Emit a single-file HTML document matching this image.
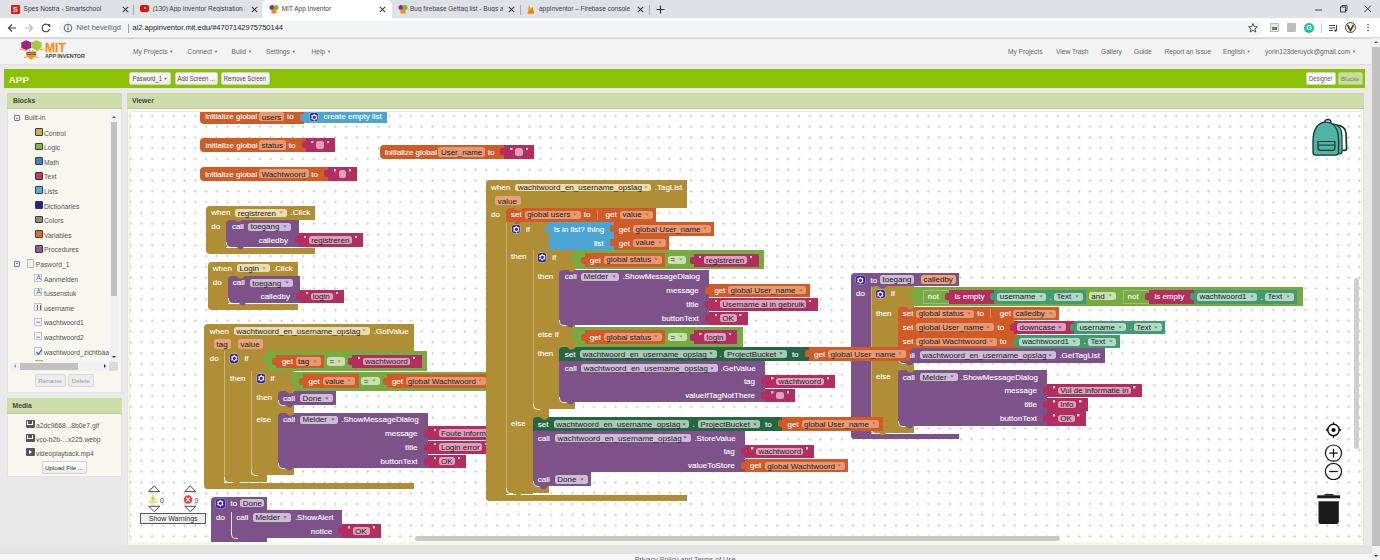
<!DOCTYPE html>
<html><head><meta charset="utf-8"><title>MIT App Inventor</title><style>
*{box-sizing:border-box;margin:0;padding:0}
html,body{width:1380px;height:560px;overflow:hidden;background:#e9e9e9;font-family:"Liberation Sans",sans-serif;position:relative}
.a{position:absolute}
.t{white-space:nowrap;line-height:1}
svg{display:block}
.w{-webkit-text-stroke:0.25px #fff}
</style></head><body>
<div class="a" style="left:0;top:0;width:1380px;height:18px;background:#dee1e6"></div>
<div class="a" style="left:262px;top:0;width:130px;height:18px;background:#fff;border-radius:5px 5px 0 0"></div>
<div class="a" style="left:11px;top:4.5px;width:8.5px;height:9px;background:#e51e12;border-radius:1px;color:#fff;font-size:7px;font-weight:bold;line-height:9px;text-align:center">S</div>
<div class="a t" style="left:23.6px;top:5.6px;font-size:6.5px;color:#3c4043;">Spes Nostra - Smartschool</div>
<div class="a" style="left:120.5px;top:4.7px;width:9px;height:9px"><svg width="9" height="9"><path d="M1.8 1.8L7.2 7.2M7.2 1.8L1.8 7.2" stroke="#3c3c3c" stroke-width="1.05"/></svg></div>
<div class="a" style="left:133.3px;top:4.5px;width:1px;height:10px;background:#a8abb0"></div>
<div class="a" style="left:140px;top:5.2px;width:9px;height:6.8px;background:#f00;border-radius:2px"></div><div class="a" style="left:143.5px;top:6.8px;width:0;height:0;border-left:3px solid #fff;border-top:1.8px solid transparent;border-bottom:1.8px solid transparent"></div>
<div class="a t" style="left:152.7px;top:5.6px;font-size:6.5px;color:#3c4043;width:92px;overflow:hidden;">(130) App Inventor Registration a</div>
<div class="a" style="left:249.5px;top:4.7px;width:9px;height:9px"><svg width="9" height="9"><path d="M1.8 1.8L7.2 7.2M7.2 1.8L1.8 7.2" stroke="#3c3c3c" stroke-width="1.05"/></svg></div>
<div class="a" style="left:268.5px;top:3.5px;width:10px;height:11px"><svg width="10" height="11"><circle cx="3" cy="3.5" r="2.5" fill="#8e2b8c"/><circle cx="7" cy="3.5" r="2.5" fill="#7bb42c"/><rect x="2.5" y="5.5" width="5" height="4" fill="#f08a24"/></svg></div>
<div class="a t" style="left:281.7px;top:5.6px;font-size:6.5px;color:#3c4043;">MIT App Inventor</div>
<div class="a" style="left:378.2px;top:4.7px;width:9px;height:9px"><svg width="9" height="9"><path d="M1.8 1.8L7.2 7.2M7.2 1.8L1.8 7.2" stroke="#3c3c3c" stroke-width="1.05"/></svg></div>
<div class="a" style="left:397.5px;top:3.5px;width:10px;height:11px"><svg width="10" height="11"><circle cx="3" cy="3.5" r="2.5" fill="#8e2b8c"/><circle cx="7" cy="3.5" r="2.5" fill="#7bb42c"/><rect x="2.5" y="5.5" width="5" height="4" fill="#f08a24"/></svg></div>
<div class="a t" style="left:410px;top:5.6px;font-size:6.5px;color:#3c4043;width:93px;overflow:hidden;">Bug firebase Gettag list - Bugs ar</div>
<div class="a" style="left:506.8px;top:4.7px;width:9px;height:9px"><svg width="9" height="9"><path d="M1.8 1.8L7.2 7.2M7.2 1.8L1.8 7.2" stroke="#3c3c3c" stroke-width="1.05"/></svg></div>
<div class="a" style="left:520px;top:4.5px;width:1px;height:10px;background:#a8abb0"></div>
<div class="a" style="left:525.5px;top:3.5px;width:9px;height:11px"><svg width="9" height="11"><path d="M1.5 9.5 L3 1 L5 5 L6.5 3 L8 9.5 Z" fill="#ffa000"/><path d="M1.5 9.5 L6.5 3 L8 9.5 Z" fill="#f57c00"/></svg></div>
<div class="a t" style="left:539px;top:5.6px;font-size:6.5px;color:#3c4043;">appInventor – Firebase console</div>
<div class="a" style="left:635.5px;top:4.7px;width:9px;height:9px"><svg width="9" height="9"><path d="M1.8 1.8L7.2 7.2M7.2 1.8L1.8 7.2" stroke="#3c3c3c" stroke-width="1.05"/></svg></div>
<div class="a" style="left:648.7px;top:4.5px;width:1px;height:10px;background:#a8abb0"></div>
<div class="a" style="left:655.5px;top:4.5px;width:9px;height:9px"><svg width="9" height="9"><path d="M4.5 0.5V8.5M0.5 4.5H8.5" stroke="#333" stroke-width="1.2"/></svg></div>
<div class="a" style="left:1313px;top:3px;width:12px;height:12px"><svg width="12" height="12"><path d="M2 7H9" stroke="#333" stroke-width="0.9"/></svg></div>
<div class="a" style="left:1338px;top:3px;width:12px;height:12px"><svg width="12" height="12"><rect x="2.5" y="4" width="5" height="5" fill="none" stroke="#333" stroke-width="0.9"/><path d="M4 4V2.5H9V7.5H7.5" fill="none" stroke="#333" stroke-width="0.9"/></svg></div>
<div class="a" style="left:1362px;top:3px;width:12px;height:12px"><svg width="12" height="12"><path d="M2.5 2.5L9 9M9 2.5L2.5 9" stroke="#333" stroke-width="0.9"/></svg></div>
<div class="a" style="left:0;top:18px;width:1380px;height:20px;background:#fff;border-bottom:1px solid #dadce0"></div>
<div class="a" style="left:58.5px;top:20.5px;width:1204px;height:15px;background:#f1f3f4;border-radius:8px"></div>
<div class="a" style="left:6px;top:22px;width:12px;height:12px"><svg width="12" height="12"><path d="M10 6H2.5M6 2.5L2.5 6L6 9.5" fill="none" stroke="#444" stroke-width="1.2"/></svg></div>
<div class="a" style="left:23px;top:22px;width:12px;height:12px"><svg width="12" height="12"><path d="M2 6H9.5M6 2.5L9.5 6L6 9.5" fill="none" stroke="#bbb" stroke-width="1.2"/></svg></div>
<div class="a" style="left:40px;top:22px;width:12px;height:12px"><svg width="12" height="12"><path d="M9.3 4.2A3.8 3.8 0 1 0 9.6 7" fill="none" stroke="#444" stroke-width="1.1"/><path d="M7.5 2.5L10 2.5L10 5Z" fill="#444" stroke="#444" stroke-width="0.6"/></svg></div>
<div class="a" style="left:63px;top:23px;width:10px;height:10px"><svg width="10" height="10"><circle cx="5" cy="5" r="3.8" fill="none" stroke="#555" stroke-width="0.9"/><path d="M5 4.3V7.3" stroke="#555" stroke-width="1"/><circle cx="5" cy="2.9" r="0.55" fill="#555"/></svg></div>
<div class="a t" style="left:76.5px;top:24.2px;font-size:7.4px;color:#5f6368">Niet beveiligd</div>
<div class="a" style="left:127.5px;top:24px;width:1px;height:9px;background:#9aa0a6"></div>
<div class="a t" style="left:132.5px;top:24px;font-size:7.5px;color:#202124">ai2.appinventor.mit.edu/#4707142975750144</div>
<div class="a" style="left:1247px;top:22px;width:12px;height:12px"><svg width="12" height="12"><path d="M6 1.5L7.3 4.6L10.5 4.8L8 6.9L8.8 10L6 8.3L3.2 10L4 6.9L1.5 4.8L4.7 4.6Z" fill="none" stroke="#444" stroke-width="0.9"/></svg></div>
<div class="a" style="left:1270px;top:23px;width:9px;height:9px;background:#e6e6e6;border:1px solid #bbb"><div class="a" style="left:1px;top:3px;width:5px;height:3px;background:linear-gradient(90deg,#e44,#4a4,#44e)"></div></div>
<div class="a" style="left:1287px;top:23px;width:9px;height:9px;background:#bdbdbd;border-radius:1px"></div>
<div class="a" style="left:1304px;top:23px;width:10px;height:10px;background:#15c39a;border-radius:5px;color:#fff;font-size:7px;font-weight:bold;line-height:10px;text-align:center">G</div>
<div class="a" style="left:1321px;top:23px;width:1px;height:10px;background:#ccc"></div>
<div class="a" style="left:1328px;top:22px;width:11px;height:12px"><svg width="11" height="12"><path d="M1 3.5H7M1 6H7M1 8.5H5" stroke="#333" stroke-width="0.9"/><path d="M8.5 3V8.5" stroke="#333" stroke-width="0.9"/><circle cx="7.6" cy="8.7" r="1.1" fill="#333"/></svg></div>
<div class="a" style="left:1345px;top:22px;width:11px;height:11px;border-radius:6px;background:#f5f0e0;border:1px solid #6b3b2a"><svg width="9" height="9" style="position:absolute;left:0;top:0"><path d="M1.5 2L4.5 7.5L7.5 2" fill="none" stroke="#2d4a1e" stroke-width="1.6"/></svg></div>
<div class="a" style="left:1367px;top:23px;width:2px;height:10px"><svg width="2" height="10"><circle cx="1" cy="1.5" r="0.8" fill="#444"/><circle cx="1" cy="4.5" r="0.8" fill="#444"/><circle cx="1" cy="7.5" r="0.8" fill="#444"/></svg></div>
<div class="a" style="left:0;top:38px;width:1372px;height:522px;background:#e9e9e9"></div>
<div class="a" style="left:0;top:38px;width:1371px;height:27px;background:#f3f3f3;border-bottom:1px solid #e0e0e0;border-top:1px solid #d4d4d4"></div>
<svg class="a" style="left:15px;top:38px" width="30" height="25">
<polygon points="11.3,2.2 16.3,4.6 16.3,9.8 11.3,12.2 6.3,9.8 6.3,4.6" fill="#a4218b"/>
<polygon points="21.4,2.2 26.6,4.6 26.6,9.8 21.4,12.2 16.3,9.8 16.3,4.6" fill="#9fcd3c"/>
<path d="M4.5 11.3Q8 10.8 11.5 12.8M28.3 11.3Q24.8 10.8 21.3 12.8" stroke="#f7931e" stroke-width="1" fill="none"/>
<path d="M11.7 13.4Q11.7 11 16.3 11Q20.9 11 20.9 13.4Z" fill="#fff"/>
<rect x="11.4" y="13.5" width="9.8" height="4.4" fill="#f7931e"/>
<rect x="11.4" y="14.2" width="9.8" height="0.9" fill="#555"/><rect x="11.4" y="16.1" width="9.8" height="0.9" fill="#555"/>
<path d="M11.4 17.9H21.2L16.3 21.7Z" fill="#f7931e"/>
<path d="M9 19.3Q11 19.8 12.5 18.5M23.6 19.3Q21.6 19.8 20.1 18.5" stroke="#f7931e" stroke-width="1" fill="none"/>
<circle cx="14.8" cy="12.3" r="0.5" fill="#333"/><circle cx="17.8" cy="12.3" r="0.5" fill="#333"/>
</svg>
<div class="a t" style="left:45px;top:42.1px;font-size:12px;font-weight:bold;color:#f7931e;letter-spacing:0.1px;-webkit-text-stroke:0.3px #f7931e">MIT</div>
<div class="a t" style="left:45.2px;top:54.3px;font-size:5.6px;font-weight:bold;color:#444;transform:scaleX(0.955);transform-origin:0 0">APP INVENTOR</div>
<div class="a t" style="left:133px;top:49px;font-size:6.6px;color:#666">My Projects <span style="font-size:4px;vertical-align:1px">▼</span></div>
<div class="a t" style="left:187.5px;top:49px;font-size:6.6px;color:#666">Connect <span style="font-size:4px;vertical-align:1px">▼</span></div>
<div class="a t" style="left:231.5px;top:49px;font-size:6.6px;color:#666">Build <span style="font-size:4px;vertical-align:1px">▼</span></div>
<div class="a t" style="left:266px;top:49px;font-size:6.6px;color:#666">Settings <span style="font-size:4px;vertical-align:1px">▼</span></div>
<div class="a t" style="left:311.5px;top:49px;font-size:6.6px;color:#666">Help <span style="font-size:4px;vertical-align:1px">▼</span></div>
<div class="a t" style="left:1008px;top:49px;font-size:6.6px;color:#666">My Projects</div>
<div class="a t" style="left:1056px;top:49px;font-size:6.6px;color:#666">View Trash</div>
<div class="a t" style="left:1101px;top:49px;font-size:6.6px;color:#666">Gallery</div>
<div class="a t" style="left:1134px;top:49px;font-size:6.6px;color:#666">Guide</div>
<div class="a t" style="left:1164.5px;top:49px;font-size:6.6px;color:#666">Report an Issue</div>
<div class="a t" style="left:1223px;top:49px;font-size:6.6px;color:#666">English <span style="font-size:4px;vertical-align:1px">▼</span></div>
<div class="a t" style="left:1265px;top:49px;font-size:6.6px;color:#666">yorin123deruyck@gmail.com <span style="font-size:4px;vertical-align:1px">▼</span></div>
<div class="a" style="left:4px;top:69px;width:1361px;height:19px;background:#8bc100"></div>
<div class="a t" style="left:8.8px;top:75px;font-size:9.8px;font-weight:bold;color:#fff">APP</div>
<div class="a t" style="left:128.5px;top:72px;width:42.5px;height:13px;background:linear-gradient(#fdfdfd,#ececec);border:1px solid #cfd2c8;border-radius:2px;font-size:6.4px;color:#444;line-height:11.5px;text-align:center;"><span style="display:inline-block;transform:scaleX(0.92)">Pasword_1 <span style="font-size:4px;vertical-align:1px">▼</span></span></div>
<div class="a t" style="left:174.5px;top:72px;width:43px;height:13px;background:linear-gradient(#fdfdfd,#ececec);border:1px solid #cfd2c8;border-radius:2px;font-size:6.4px;color:#444;line-height:11.5px;text-align:center;"><span style="display:inline-block;transform:scaleX(0.92)">Add Screen ...</span></div>
<div class="a t" style="left:220.5px;top:72px;width:49px;height:13px;background:linear-gradient(#fdfdfd,#ececec);border:1px solid #cfd2c8;border-radius:2px;font-size:6.4px;color:#444;line-height:11.5px;text-align:center;"><span style="display:inline-block;transform:scaleX(0.92)">Remove Screen</span></div>
<div class="a t" style="left:1305.5px;top:72px;width:30.5px;height:13px;background:linear-gradient(#fdfdfd,#ececec);border:1px solid #cfd2c8;border-radius:2px;font-size:6.4px;color:#444;line-height:11.5px;text-align:center;background:#fff;color:#555"><span style="display:inline-block;transform:scaleX(0.92)">Designer</span></div>
<div class="a t" style="left:1337.5px;top:72px;width:25px;height:13px;background:#c8dd9a;border:1px solid #b8d080;border-radius:2px;font-size:6.2px;color:#777;line-height:11px;text-align:center">Blocks</div>
<div class="a" style="left:7px;top:92.5px;width:114.5px;height:300.5px;background:#f7f7ef;border:1px solid #e4e4dc"></div>
<div class="a" style="left:7px;top:92.5px;width:114.5px;height:16px;background:#cddcaa;border-bottom:1px solid #b9c99a"></div>
<div class="a t" style="left:13px;top:97.6px;font-size:6.8px;font-weight:bold;color:#444">Blocks</div>
<div class="a" style="left:127px;top:92.5px;width:1237px;height:453px;background:#f7f7ef;border:1px solid #e4e4dc"></div>
<div class="a" style="left:127px;top:92.5px;width:1237px;height:16px;background:#cddcaa;border-bottom:1px solid #b9c99a"></div>
<div class="a t" style="left:132px;top:97.6px;font-size:6.8px;font-weight:bold;color:#444">Viewer</div>
<div class="a" style="left:7px;top:398px;width:114.5px;height:79px;background:#f7f7ef;border:1px solid #e4e4dc"></div>
<div class="a" style="left:7px;top:398px;width:114.5px;height:16px;background:#cddcaa;border-bottom:1px solid #b9c99a"></div>
<div class="a t" style="left:12.5px;top:403px;font-size:6.8px;font-weight:bold;color:#444">Media</div>
<div class="a" style="left:13.7px;top:115.00px;width:6px;height:6px;border:0.9px solid #6b6fc8;border-radius:1px"><div class="a" style="left:1.1px;top:1.7px;width:2.1px;height:0.9px;background:#6b6fc8"></div></div>
<div class="a t" style="left:24.5px;top:115.12px;font-size:6.75px;color:#555;">Built-in</div>
<div class="a" style="left:35px;top:128.00px;width:7.8px;height:7.8px;background:#d4ab4c;border:0.9px solid #3a3a3a;border-radius:1px"></div>
<div class="a t" style="left:44px;top:130.52px;font-size:6.75px;color:#555;">Control</div>
<div class="a" style="left:35px;top:142.60px;width:7.8px;height:7.8px;background:#84b54b;border:0.9px solid #3a3a3a;border-radius:1px"></div>
<div class="a t" style="left:44px;top:145.12px;font-size:6.75px;color:#555;">Logic</div>
<div class="a" style="left:35px;top:157.20px;width:7.8px;height:7.8px;background:#4a7fc1;border:0.9px solid #3a3a3a;border-radius:1px"></div>
<div class="a t" style="left:44px;top:159.72px;font-size:6.75px;color:#555;">Math</div>
<div class="a" style="left:35px;top:171.80px;width:7.8px;height:7.8px;background:#c53b6e;border:0.9px solid #3a3a3a;border-radius:1px"></div>
<div class="a t" style="left:44px;top:174.32px;font-size:6.75px;color:#555;">Text</div>
<div class="a" style="left:35px;top:186.40px;width:7.8px;height:7.8px;background:#4db0de;border:0.9px solid #3a3a3a;border-radius:1px"></div>
<div class="a t" style="left:44px;top:188.92px;font-size:6.75px;color:#555;">Lists</div>
<div class="a" style="left:35px;top:201.00px;width:7.8px;height:7.8px;background:#2b1d93;border:0.9px solid #3a3a3a;border-radius:1px"></div>
<div class="a t" style="left:44px;top:203.52px;font-size:6.75px;color:#555;">Dictionaries</div>
<div class="a" style="left:35px;top:215.60px;width:7.8px;height:7.8px;background:#8a8a8a;border:0.9px solid #3a3a3a;border-radius:1px"></div>
<div class="a t" style="left:44px;top:218.12px;font-size:6.75px;color:#555;">Colors</div>
<div class="a" style="left:35px;top:230.20px;width:7.8px;height:7.8px;background:#e06b2f;border:0.9px solid #3a3a3a;border-radius:1px"></div>
<div class="a t" style="left:44px;top:232.72px;font-size:6.75px;color:#555;">Variables</div>
<div class="a" style="left:35px;top:244.80px;width:7.8px;height:7.8px;background:#8c5d97;border:0.9px solid #3a3a3a;border-radius:1px"></div>
<div class="a t" style="left:44px;top:247.32px;font-size:6.75px;color:#555;">Procedures</div>
<div class="a" style="left:13.7px;top:260.50px;width:6px;height:6px;border:0.9px solid #6b6fc8;border-radius:1px"><div class="a" style="left:1.1px;top:1.7px;width:2.1px;height:0.9px;background:#6b6fc8"></div></div>
<div class="a" style="left:27px;top:258.70px;width:6.5px;height:9px;background:#f2f2f2;border:0.8px solid #bbb;border-top:1.6px solid #a9c93a;border-radius:1px"></div>
<div class="a t" style="left:35.7px;top:261.92px;font-size:6.75px;color:#555;">Pasword_1</div>
<div class="a" style="left:34.3px;top:273.80px;width:8px;height:8px;background:#f4f4f4;border:0.8px solid #c4c4c4"><span style="position:absolute;left:1px;top:-1px;font-size:7px;color:#4a6fc0">A</span></div>
<div class="a t" style="left:44px;top:276.52px;font-size:6.75px;color:#555;max-width:64.5px;overflow:hidden;padding-bottom:2px">Aanmelden</div>
<div class="a" style="left:34.3px;top:288.40px;width:8px;height:8px;background:#f4f4f4;border:0.8px solid #c4c4c4"><span style="position:absolute;left:1px;top:-1px;font-size:7px;color:#4a6fc0">A</span></div>
<div class="a t" style="left:44px;top:291.12px;font-size:6.75px;color:#555;max-width:64.5px;overflow:hidden;padding-bottom:2px">tussenstuk</div>
<div class="a" style="left:34.3px;top:303.00px;width:8px;height:8px;background:#f4f4f4;border:0.8px solid #c4c4c4"><span style="position:absolute;left:1.5px;top:1px;width:4px;height:5px;border-left:0.8px solid #666;border-right:0.8px solid #666"></span></div>
<div class="a t" style="left:44px;top:305.72px;font-size:6.75px;color:#555;max-width:64.5px;overflow:hidden;padding-bottom:2px">username</div>
<div class="a" style="left:34.3px;top:317.60px;width:8px;height:8px;background:#f4f4f4;border:0.8px solid #c4c4c4"><span style="position:absolute;left:1px;top:2.5px;font-size:5px;color:#4a6fc0;line-height:3px">••</span></div>
<div class="a t" style="left:44px;top:320.32px;font-size:6.75px;color:#555;max-width:64.5px;overflow:hidden;padding-bottom:2px">wachtwoord1</div>
<div class="a" style="left:34.3px;top:332.20px;width:8px;height:8px;background:#f4f4f4;border:0.8px solid #c4c4c4"><span style="position:absolute;left:1px;top:2.5px;font-size:5px;color:#4a6fc0;line-height:3px">••</span></div>
<div class="a t" style="left:44px;top:334.92px;font-size:6.75px;color:#555;max-width:64.5px;overflow:hidden;padding-bottom:2px">wachtwoord2</div>
<div class="a" style="left:34.3px;top:346.80px;width:8px;height:8px;background:#f4f4f4;border:0.8px solid #c4c4c4"><svg width="8" height="8" style="position:absolute;left:0;top:0"><path d="M1.5 4L3.5 6.2L7 1.5" fill="none" stroke="#3f6fc8" stroke-width="1.3"/></svg></div>
<div class="a t" style="left:44px;top:349.52px;font-size:6.75px;color:#555;max-width:64.5px;overflow:hidden;padding-bottom:2px">wachtwoord_zichtbaar</div>
<div class="a" style="left:34.5px;top:360px;width:8px;height:2px;background:#e8eed8;border-top:1px solid #a9c93a"></div>
<div class="a" style="left:109.5px;top:112px;width:8px;height:250px;background:#f1f1f1"></div>
<div class="a" style="left:110.5px;top:121.5px;width:6px;height:174px;background:#c1c1c1"></div>
<div class="a" style="left:111.5px;top:116px;width:0;height:0;border-left:2.5px solid transparent;border-right:2.5px solid transparent;border-bottom:2.5px solid #555"></div>
<div class="a" style="left:111.5px;top:355.5px;width:0;height:0;border-left:2.5px solid transparent;border-right:2.5px solid transparent;border-top:2.5px solid #333"></div>
<div class="a" style="left:10px;top:362px;width:108px;height:8.5px;background:#f1f1f1"></div>
<div class="a" style="left:19.5px;top:363px;width:58.5px;height:6.5px;background:#c1c1c1"></div>
<div class="a" style="left:109px;top:362px;width:9px;height:8.5px;background:#dcdcdc"></div>
<div class="a" style="left:13.5px;top:364px;width:0;height:0;border-top:2.5px solid transparent;border-bottom:2.5px solid transparent;border-right:2.5px solid #999"></div>
<div class="a" style="left:103.5px;top:364px;width:0;height:0;border-top:2.5px solid transparent;border-bottom:2.5px solid transparent;border-left:2.5px solid #333"></div>
<div class="a t" style="left:34.5px;top:373.5px;width:31px;height:13.5px;background:#ececec;border:1px solid #d8d8d8;border-radius:2px;font-size:6.2px;color:#999;line-height:11.5px;text-align:center">Rename</div>
<div class="a t" style="left:68px;top:373.5px;width:25.5px;height:13.5px;background:#ececec;border:1px solid #d8d8d8;border-radius:2px;font-size:6.2px;color:#999;line-height:11.5px;text-align:center">Delete</div>
<div class="a" style="left:25.7px;top:419.7px;width:9px;height:8.5px;background:#555;border-radius:1px"></div>
<div class="a" style="left:27px;top:420.7px;width:6px;height:4px;border:1px solid #fff;border-top:0"></div>
<div class="a t" style="left:36px;top:422.72px;font-size:6.75px;color:#555;">a2dc9668...8b0e7.gif</div>
<div class="a" style="left:25.7px;top:433.65px;width:9px;height:8.5px;background:#555;border-radius:1px"></div>
<div class="a" style="left:27px;top:434.65px;width:6px;height:4px;border:1px solid #fff;border-top:0"></div>
<div class="a t" style="left:36px;top:436.67px;font-size:6.75px;color:#555;">vco-b2b-...x225.webp</div>
<div class="a" style="left:25.7px;top:447.59999999999997px;width:9px;height:8.5px;background:#555;border-radius:1px"></div>
<div class="a" style="left:29px;top:449.59999999999997px;width:0;height:0;border-left:3px solid #fff;border-top:2.2px solid transparent;border-bottom:2.2px solid transparent"></div>
<div class="a t" style="left:36px;top:450.62px;font-size:6.75px;color:#555;">videoplayback.mp4</div>
<div class="a t" style="left:41.5px;top:460.5px;width:45px;height:13px;background:linear-gradient(#fdfdfd,#ececec);border:1px solid #d0d0d0;border-radius:2px;font-size:6.2px;color:#333;line-height:11px;text-align:center">Upload File ...</div>
<div class="a" style="left:1371.5px;top:38px;width:8.5px;height:522px;background:#f1f1f1"></div>
<div class="a" style="left:1372px;top:47px;width:8px;height:499px;background:#c1c1c1"></div>
<div class="a" style="left:1373.5px;top:40.5px;width:0;height:0;border-left:2.5px solid transparent;border-right:2.5px solid transparent;border-bottom:2.5px solid #555"></div>
<div class="a" style="left:1373.5px;top:554.5px;width:0;height:0;border-left:2.5px solid transparent;border-right:2.5px solid transparent;border-top:2.5px solid #333"></div>
<div class="a" style="left:0;top:546px;width:1371.5px;height:7.5px;background:#e3e3e3"></div>
<div class="a" style="left:0;top:553.5px;width:1371.5px;height:7px;background:#f5f5f5"></div>
<div class="a t" style="left:634.7px;top:556.1px;font-size:7.05px;color:#666">Privacy Policy and Terms of Use</div>
<div class="a" style="left:130px;top:112.3px;width:1230.5px;height:430.2px;background:#fff;overflow:hidden;box-shadow:-0.5px -0.5px 0 #e2e2dc">
<svg class="a" style="left:0;top:0" width="1231" height="431"><defs><pattern id="g" x="-4.790" y="-1.490" width="10.78" height="10.78" patternUnits="userSpaceOnUse"><path d="M3.890 5.390H6.890M5.390 3.890V6.890" stroke="#d2d2d2" stroke-width="0.95"/></pattern></defs><rect width="1231" height="431" fill="url(#g)"/></svg>
</div>
<div class="a" style="left:130px;top:112.3px;width:1230.5px;height:430.2px;overflow:hidden"><div class="a" style="left:-130px;top:-112.3px;width:1380px;height:560px">
<div class="a" style="left:200px;top:112px;width:104px;height:12px;background:#d05b26;border-radius:0 0 0 4px;"></div>
<div class="a t" style="left:205.25px;top:113.11px;font-size:8.00px;color:#fff;-webkit-text-stroke:0.1px #fff;transform:scaleX(1.0000);transform-origin:0 0;">initialize global</div>
<div class="a" style="left:259.25px;top:112.25px;width:25.00px;height:9.00px;background:#e59a76;border-radius:2.5px"></div>
<div class="a t" style="left:261.75px;top:113.56px;font-size:8.00px;color:#1a1a1a;transform:scaleX(1.0000);transform-origin:0 0;">users</div>
<div class="a t" style="left:287.00px;top:113.11px;font-size:8.00px;color:#fff;-webkit-text-stroke:0.1px #fff;transform:scaleX(1.0000);transform-origin:0 0;">to</div>
<div class="a" style="left:304px;top:112px;width:83px;height:11px;background:#4aa5d5;"></div>
<div class="a" style="left:299.75px;top:113.88px;width:4.5px;height:7px;background:#4aa5d5;border-radius:2px 0 0 2px"></div>
<div class="a" style="left:309.50px;top:112.50px;width:8.6px;height:8.6px;background:#2b22c4;border-radius:2px;box-shadow:0 0 0 0.5px rgba(255,255,230,0.45)"><svg width="8.6" height="8.6" style="display:block"><circle cx="4.3" cy="4.3" r="2.2" fill="none" stroke="#f4f0d8" stroke-width="1.2"/><g fill="#f4f0d8"><circle cx="4.3" cy="1.5" r="0.75"/><circle cx="4.3" cy="7.1" r="0.75"/><circle cx="1.9" cy="2.9" r="0.75"/><circle cx="6.7" cy="2.9" r="0.75"/><circle cx="1.9" cy="5.7" r="0.75"/><circle cx="6.7" cy="5.7" r="0.75"/></g><circle cx="4.3" cy="4.3" r="0.9" fill="#2b22c4"/></svg></div>
<div class="a t" style="left:323.50px;top:113.11px;font-size:8.00px;color:#fff;-webkit-text-stroke:0.1px #fff;transform:scaleX(1.0000);transform-origin:0 0;">create empty list</div>
<div class="a" style="left:200px;top:138px;width:106px;height:14px;background:#d05b26;border-radius:4px 0 0 4px;"></div>
<div class="a t" style="left:205.60px;top:141.61px;font-size:8.00px;color:#fff;-webkit-text-stroke:0.1px #fff;transform:scaleX(1.0000);transform-origin:0 0;">initialize global</div>
<div class="a" style="left:259.10px;top:140.40px;width:27.00px;height:9.40px;background:#e59a76;border-radius:2.5px"></div>
<div class="a t" style="left:261.60px;top:141.91px;font-size:8.00px;color:#1a1a1a;transform:scaleX(1.0000);transform-origin:0 0;">status</div>
<div class="a t" style="left:288.70px;top:141.61px;font-size:8.00px;color:#fff;-webkit-text-stroke:0.1px #fff;transform:scaleX(1.0000);transform-origin:0 0;">to</div>
<div class="a" style="left:306px;top:138px;width:29px;height:14px;background:#b32d5e;"></div>
<div class="a" style="left:301.70px;top:141.30px;width:4.5px;height:7px;background:#b32d5e;border-radius:2px 0 0 2px"></div>
<div class="a" style="left:316.20px;top:141.00px;width:7.60px;height:7.60px;background:#dba2bd;border-radius:2.5px"></div>
<svg class="a" style="left:311.20px;top:140.50px" width="2.4" height="2.4"><rect width="2.4" height="2.4" fill="#f3dbe6"/></svg>
<svg class="a" style="left:326.60px;top:140.50px" width="2.4" height="2.4"><rect width="2.4" height="2.4" fill="#f3dbe6"/></svg>
<div class="a" style="left:200px;top:167px;width:128px;height:14px;background:#d05b26;border-radius:4px 0 0 4px;"></div>
<div class="a t" style="left:205.25px;top:170.56px;font-size:8.00px;color:#fff;-webkit-text-stroke:0.1px #fff;transform:scaleX(1.0000);transform-origin:0 0;">initialize global</div>
<div class="a" style="left:258.90px;top:169.10px;width:50.10px;height:9.30px;background:#e59a76;border-radius:2.5px"></div>
<div class="a t" style="left:261.40px;top:170.56px;font-size:8.00px;color:#1a1a1a;transform:scaleX(1.0000);transform-origin:0 0;">Wachtwoord</div>
<div class="a t" style="left:311.30px;top:170.56px;font-size:8.00px;color:#fff;-webkit-text-stroke:0.1px #fff;transform:scaleX(1.0000);transform-origin:0 0;">to</div>
<div class="a" style="left:328px;top:167px;width:29px;height:14px;background:#b32d5e;"></div>
<div class="a" style="left:324.30px;top:170.25px;width:4.5px;height:7px;background:#b32d5e;border-radius:2px 0 0 2px"></div>
<div class="a" style="left:338.90px;top:169.95px;width:7.40px;height:7.60px;background:#dba2bd;border-radius:2.5px"></div>
<svg class="a" style="left:333.90px;top:169.45px" width="2.4" height="2.4"><rect width="2.4" height="2.4" fill="#f3dbe6"/></svg>
<svg class="a" style="left:349.10px;top:169.45px" width="2.4" height="2.4"><rect width="2.4" height="2.4" fill="#f3dbe6"/></svg>
<div class="a" style="left:380px;top:145px;width:124px;height:14px;background:#d05b26;border-radius:4px 0 0 4px;"></div>
<div class="a t" style="left:384.90px;top:148.71px;font-size:8.00px;color:#fff;-webkit-text-stroke:0.1px #fff;transform:scaleX(1.0000);transform-origin:0 0;">initialize global</div>
<div class="a" style="left:438.40px;top:147.10px;width:46.80px;height:9.50px;background:#e59a76;border-radius:2.5px"></div>
<div class="a t" style="left:440.90px;top:148.66px;font-size:8.00px;color:#1a1a1a;transform:scaleX(1.0000);transform-origin:0 0;">User_name</div>
<div class="a t" style="left:487.70px;top:148.71px;font-size:8.00px;color:#fff;-webkit-text-stroke:0.1px #fff;transform:scaleX(1.0000);transform-origin:0 0;">to</div>
<div class="a" style="left:504px;top:145px;width:30px;height:14px;background:#b32d5e;"></div>
<div class="a" style="left:500.30px;top:148.45px;width:4.5px;height:7px;background:#b32d5e;border-radius:2px 0 0 2px"></div>
<div class="a" style="left:515.40px;top:148.15px;width:7.40px;height:7.60px;background:#dba2bd;border-radius:2.5px"></div>
<svg class="a" style="left:510.40px;top:147.65px" width="2.4" height="2.4"><rect width="2.4" height="2.4" fill="#f3dbe6"/></svg>
<svg class="a" style="left:525.60px;top:147.65px" width="2.4" height="2.4"><rect width="2.4" height="2.4" fill="#f3dbe6"/></svg>
<div class="a" style="left:206px;top:206px;width:109px;height:14px;background:#b08e35;border-radius:4px 0 0 0;"></div>
<div class="a" style="left:206px;top:220px;width:20px;height:28px;background:#b08e35;"></div>
<div class="a" style="left:206px;top:248px;width:109px;height:6px;background:#b08e35;border-radius:0 0 0 4px;"></div>
<div class="a t" style="left:211.25px;top:209.41px;font-size:8.00px;color:#fff;-webkit-text-stroke:0.1px #fff;transform:scaleX(1.0000);transform-origin:0 0;">when</div>
<div class="a" style="left:235.25px;top:208.50px;width:51.65px;height:8.40px;background:#e7dcb4;border-radius:2.5px"></div>
<div class="a t" style="left:237.75px;top:209.51px;font-size:8.00px;color:#1a1a1a;transform:scaleX(1.0000);transform-origin:0 0;">registreren</div>
<svg class="a" style="left:279.30px;top:211.10px" width="4" height="3"><path d="M0.3 0.4H3.7L2 2.6Z" fill="#b08e35"/></svg>
<div class="a t" style="left:290.60px;top:209.41px;font-size:8.00px;color:#fff;-webkit-text-stroke:0.1px #fff;transform:scaleX(1.0000);transform-origin:0 0;">.Click</div>
<div class="a t" style="left:211.25px;top:223.06px;font-size:8.00px;color:#fff;-webkit-text-stroke:0.1px #fff;transform:scaleX(1.0000);transform-origin:0 0;">do</div>
<div class="a" style="left:226px;top:220px;width:4px;height:4px;background:#b08e35;"></div>
<div class="a" style="left:226px;top:243px;width:4px;height:4px;background:#b08e35;"></div>
<div class="a" style="left:226px;top:220px;width:73px;height:27px;background:#7c5289;border-radius:4px 0 0 4px;"></div>
<div class="a t" style="left:231.90px;top:223.31px;font-size:8.00px;color:#fff;-webkit-text-stroke:0.1px #fff;transform:scaleX(1.0000);transform-origin:0 0;">call</div>
<div class="a" style="left:248.00px;top:222.50px;width:42.60px;height:8.10px;background:#cdbcd5;border-radius:2.5px"></div>
<div class="a t" style="left:250.50px;top:223.36px;font-size:8.00px;color:#1a1a1a;transform:scaleX(1.0000);transform-origin:0 0;">toegang</div>
<svg class="a" style="left:283.00px;top:224.95px" width="4" height="3"><path d="M0.3 0.4H3.7L2 2.6Z" fill="#7c5289"/></svg>
<div class="a t" style="left:-12.00px;width:300.00px;text-align:right;top:236.81px;font-size:8.00px;color:#fff;-webkit-text-stroke:0.1px #fff;transform:scaleX(1.0000);transform-origin:300.00px 0">calledby</div>
<div class="a" style="left:299px;top:233px;width:64px;height:14px;background:#b32d5e;"></div>
<div class="a" style="left:294.50px;top:236.45px;width:4.5px;height:7px;background:#b32d5e;border-radius:2px 0 0 2px"></div>
<div class="a" style="left:309.00px;top:236.15px;width:43.25px;height:7.60px;background:#dba2bd;border-radius:2.5px"></div>
<div class="a t" style="left:311.20px;top:236.76px;font-size:8.00px;color:#1a1a1a;transform:scaleX(1.0000);transform-origin:0 0;">registreren</div>
<svg class="a" style="left:304.00px;top:235.65px" width="2.4" height="2.4"><rect width="2.4" height="2.4" fill="#f3dbe6"/></svg>
<svg class="a" style="left:355.05px;top:235.65px" width="2.4" height="2.4"><rect width="2.4" height="2.4" fill="#f3dbe6"/></svg>
<div class="a" style="left:208px;top:262px;width:90px;height:14px;background:#b08e35;border-radius:4px 0 0 0;"></div>
<div class="a" style="left:208px;top:276px;width:20px;height:28px;background:#b08e35;"></div>
<div class="a" style="left:208px;top:304px;width:90px;height:6px;background:#b08e35;border-radius:0 0 0 4px;"></div>
<div class="a t" style="left:212.75px;top:265.31px;font-size:8.00px;color:#fff;-webkit-text-stroke:0.1px #fff;transform:scaleX(1.0000);transform-origin:0 0;">when</div>
<div class="a" style="left:236.90px;top:264.40px;width:33.10px;height:8.10px;background:#e7dcb4;border-radius:2.5px"></div>
<div class="a t" style="left:239.40px;top:265.26px;font-size:8.00px;color:#1a1a1a;transform:scaleX(1.0000);transform-origin:0 0;">Login</div>
<svg class="a" style="left:262.40px;top:266.85px" width="4" height="3"><path d="M0.3 0.4H3.7L2 2.6Z" fill="#b08e35"/></svg>
<div class="a t" style="left:273.10px;top:265.31px;font-size:8.00px;color:#fff;-webkit-text-stroke:0.1px #fff;transform:scaleX(1.0000);transform-origin:0 0;">.Click</div>
<div class="a t" style="left:212.75px;top:279.06px;font-size:8.00px;color:#fff;-webkit-text-stroke:0.1px #fff;transform:scaleX(1.0000);transform-origin:0 0;">do</div>
<div class="a" style="left:228px;top:276px;width:4px;height:4px;background:#b08e35;"></div>
<div class="a" style="left:228px;top:299px;width:4px;height:4px;background:#b08e35;"></div>
<div class="a" style="left:228px;top:276px;width:72px;height:27px;background:#7c5289;border-radius:4px 0 0 4px;"></div>
<div class="a t" style="left:232.75px;top:279.31px;font-size:8.00px;color:#fff;-webkit-text-stroke:0.1px #fff;transform:scaleX(1.0000);transform-origin:0 0;">call</div>
<div class="a" style="left:249.75px;top:278.75px;width:42.75px;height:8.15px;background:#cdbcd5;border-radius:2.5px"></div>
<div class="a t" style="left:252.25px;top:279.63px;font-size:8.00px;color:#1a1a1a;transform:scaleX(1.0000);transform-origin:0 0;">toegang</div>
<svg class="a" style="left:284.90px;top:281.22px" width="4" height="3"><path d="M0.3 0.4H3.7L2 2.6Z" fill="#7c5289"/></svg>
<div class="a t" style="left:-10.00px;width:300.00px;text-align:right;top:292.81px;font-size:8.00px;color:#fff;-webkit-text-stroke:0.1px #fff;transform:scaleX(1.0000);transform-origin:300.00px 0">calledby</div>
<div class="a" style="left:300px;top:290px;width:44px;height:13px;background:#b32d5e;"></div>
<div class="a" style="left:296.00px;top:292.82px;width:4.5px;height:7px;background:#b32d5e;border-radius:2px 0 0 2px"></div>
<div class="a" style="left:310.60px;top:292.52px;width:22.15px;height:7.60px;background:#dba2bd;border-radius:2.5px"></div>
<div class="a t" style="left:312.80px;top:293.13px;font-size:8.00px;color:#1a1a1a;transform:scaleX(1.0000);transform-origin:0 0;">login</div>
<svg class="a" style="left:305.60px;top:292.02px" width="2.4" height="2.4"><rect width="2.4" height="2.4" fill="#f3dbe6"/></svg>
<svg class="a" style="left:335.55px;top:292.02px" width="2.4" height="2.4"><rect width="2.4" height="2.4" fill="#f3dbe6"/></svg>
<svg class="a" style="left:233.75px;top:219.45px" width="9" height="3.5"><path d="M0 0L3 2.6H6L9 0Z" fill="#b08e35"/></svg>
<div class="a" style="left:225.80px;top:241.90px;width:7px;height:6px;border-left:1px solid rgba(255,255,255,0.85);border-bottom:1px solid rgba(255,255,255,0.85);border-bottom-left-radius:5px"></div>
<svg class="a" style="left:235.50px;top:246.00px" width="9" height="4"><path d="M0 0L3 3.2H6L9 0Z" fill="#7c5289"/></svg>
<svg class="a" style="left:235.60px;top:275.70px" width="9" height="3.5"><path d="M0 0L3 2.6H6L9 0Z" fill="#b08e35"/></svg>
<div class="a" style="left:227.80px;top:297.90px;width:7px;height:6px;border-left:1px solid rgba(255,255,255,0.85);border-bottom:1px solid rgba(255,255,255,0.85);border-bottom-left-radius:5px"></div>
<svg class="a" style="left:237.50px;top:302.00px" width="9" height="4"><path d="M0 0L3 3.2H6L9 0Z" fill="#7c5289"/></svg>
<div class="a" style="left:204px;top:324px;width:210px;height:27px;background:#b08e35;border-radius:4px 0 0 0;"></div>
<div class="a" style="left:204px;top:351px;width:20px;height:138px;background:#b08e35;border-radius:0 0 0 4px;"></div>
<div class="a" style="left:204px;top:483px;width:210px;height:6px;background:#b08e35;border-radius:0 0 0 4px;"></div>
<div class="a t" style="left:209.75px;top:327.56px;font-size:8.00px;color:#fff;-webkit-text-stroke:0.1px #fff;transform:scaleX(1.0000);transform-origin:0 0;">when</div>
<div class="a" style="left:233.75px;top:326.50px;width:136.25px;height:8.40px;background:#e7dcb4;border-radius:2.5px"></div>
<div class="a t" style="left:236.25px;top:327.51px;font-size:8.00px;color:#1a1a1a;transform:scaleX(1.0000);transform-origin:0 0;">wachtwoord_en_username_opslag</div>
<svg class="a" style="left:362.40px;top:329.10px" width="4" height="3"><path d="M0.3 0.4H3.7L2 2.6Z" fill="#b08e35"/></svg>
<div class="a t" style="left:373.75px;top:327.56px;font-size:8.00px;color:#fff;-webkit-text-stroke:0.1px #fff;transform:scaleX(1.0000);transform-origin:0 0;">.GotValue</div>
<div class="a" style="left:214.00px;top:339.25px;width:17.00px;height:9.35px;background:#e8a27c;border-radius:2.5px"></div>
<div class="a t" style="left:216.50px;top:340.73px;font-size:8.00px;color:#1a1a1a;transform:scaleX(1.0000);transform-origin:0 0;">tag</div>
<div class="a" style="left:238.10px;top:339.25px;width:25.00px;height:9.35px;background:#e8a27c;border-radius:2.5px"></div>
<div class="a t" style="left:240.60px;top:340.73px;font-size:8.00px;color:#1a1a1a;transform:scaleX(1.0000);transform-origin:0 0;">value</div>
<div class="a t" style="left:209.75px;top:354.81px;font-size:8.00px;color:#fff;-webkit-text-stroke:0.1px #fff;transform:scaleX(1.0000);transform-origin:0 0;">do</div>
<div class="a" style="left:224px;top:351px;width:4px;height:4px;background:#b08e35;"></div>
<div class="a" style="left:224px;top:478px;width:4px;height:4px;background:#b08e35;"></div>
<div class="a" style="left:224px;top:351px;width:43px;height:20px;background:#b08e35;border-radius:3px 0 0 0;"></div>
<div class="a" style="left:224px;top:371px;width:27px;height:104px;background:#b08e35;"></div>
<div class="a" style="left:224px;top:475px;width:43px;height:7px;background:#b08e35;border-radius:0 0 0 3px;"></div>
<div class="a" style="left:224px;top:351px;width:1px;height:131px;background:rgba(255,255,255,0.35);"></div>
<div class="a" style="left:229.75px;top:354.25px;width:8.6px;height:8.6px;background:#2b22c4;border-radius:2px;box-shadow:0 0 0 0.5px rgba(255,255,230,0.45)"><svg width="8.6" height="8.6" style="display:block"><circle cx="4.3" cy="4.3" r="2.2" fill="none" stroke="#f4f0d8" stroke-width="1.2"/><g fill="#f4f0d8"><circle cx="4.3" cy="1.5" r="0.75"/><circle cx="4.3" cy="7.1" r="0.75"/><circle cx="1.9" cy="2.9" r="0.75"/><circle cx="6.7" cy="2.9" r="0.75"/><circle cx="1.9" cy="5.7" r="0.75"/><circle cx="6.7" cy="5.7" r="0.75"/></g><circle cx="4.3" cy="4.3" r="0.9" fill="#2b22c4"/></svg></div>
<div class="a t" style="left:244.40px;top:354.81px;font-size:8.00px;color:#fff;-webkit-text-stroke:0.1px #fff;transform:scaleX(1.0000);transform-origin:0 0;">if</div>
<div class="a t" style="left:230.00px;top:374.56px;font-size:8.00px;color:#fff;-webkit-text-stroke:0.1px #fff;transform:scaleX(1.0000);transform-origin:0 0;">then</div>
<div class="a" style="left:267px;top:351px;width:160px;height:20px;background:#77ab41;"></div>
<div class="a" style="left:263.25px;top:355.05px;width:4.5px;height:7px;background:#77ab41;border-radius:2px 0 0 2px"></div>
<div class="a" style="left:276px;top:355px;width:48px;height:13px;background:#d05b26;"></div>
<div class="a" style="left:272.25px;top:357.88px;width:4.5px;height:7px;background:#d05b26;border-radius:2px 0 0 2px"></div>
<div class="a t" style="left:281.90px;top:358.21px;font-size:8.00px;color:#fff;-webkit-text-stroke:0.1px #fff;transform:scaleX(1.0000);transform-origin:0 0;">get</div>
<div class="a" style="left:295.60px;top:357.00px;width:25.00px;height:8.50px;background:#e59a76;border-radius:2.5px"></div>
<div class="a t" style="left:298.10px;top:358.06px;font-size:8.00px;color:#1a1a1a;transform:scaleX(1.0000);transform-origin:0 0;">tag</div>
<svg class="a" style="left:313.00px;top:359.65px" width="4" height="3"><path d="M0.3 0.4H3.7L2 2.6Z" fill="#d05b26"/></svg>
<div class="a" style="left:326.90px;top:357.00px;width:18.10px;height:8.50px;background:#c9e0b0;border-radius:2.5px"></div>
<div class="a t" style="left:329.40px;top:358.06px;font-size:8.00px;color:#1a1a1a;transform:scaleX(1.0000);transform-origin:0 0;">=</div>
<svg class="a" style="left:337.40px;top:359.65px" width="4" height="3"><path d="M0.3 0.4H3.7L2 2.6Z" fill="#77ab41"/></svg>
<div class="a" style="left:352px;top:355px;width:70px;height:13px;background:#b32d5e;"></div>
<div class="a" style="left:347.90px;top:357.88px;width:4.5px;height:7px;background:#b32d5e;border-radius:2px 0 0 2px"></div>
<div class="a" style="left:362.90px;top:357.57px;width:47.10px;height:7.60px;background:#dba2bd;border-radius:2.5px"></div>
<div class="a t" style="left:365.10px;top:358.18px;font-size:8.00px;color:#1a1a1a;transform:scaleX(1.0000);transform-origin:0 0;">wachtwoord</div>
<svg class="a" style="left:357.90px;top:357.07px" width="2.4" height="2.4"><rect width="2.4" height="2.4" fill="#f3dbe6"/></svg>
<svg class="a" style="left:412.80px;top:357.07px" width="2.4" height="2.4"><rect width="2.4" height="2.4" fill="#f3dbe6"/></svg>
<div class="a" style="left:251px;top:371px;width:4px;height:4px;background:#b08e35;"></div>
<div class="a" style="left:251px;top:471px;width:4px;height:4px;background:#b08e35;"></div>
<div class="a" style="left:251px;top:371px;width:43px;height:20px;background:#b08e35;border-radius:3px 0 0 0;"></div>
<div class="a" style="left:251px;top:391px;width:27px;height:77px;background:#b08e35;"></div>
<div class="a" style="left:251px;top:405px;width:43px;height:8px;background:#b08e35;"></div>
<div class="a" style="left:251px;top:468px;width:43px;height:7px;background:#b08e35;border-radius:0 0 0 3px;"></div>
<div class="a" style="left:251px;top:371px;width:1px;height:104px;background:rgba(255,255,255,0.35);"></div>
<div class="a" style="left:256.90px;top:374.00px;width:8.6px;height:8.6px;background:#2b22c4;border-radius:2px;box-shadow:0 0 0 0.5px rgba(255,255,230,0.45)"><svg width="8.6" height="8.6" style="display:block"><circle cx="4.3" cy="4.3" r="2.2" fill="none" stroke="#f4f0d8" stroke-width="1.2"/><g fill="#f4f0d8"><circle cx="4.3" cy="1.5" r="0.75"/><circle cx="4.3" cy="7.1" r="0.75"/><circle cx="1.9" cy="2.9" r="0.75"/><circle cx="6.7" cy="2.9" r="0.75"/><circle cx="1.9" cy="5.7" r="0.75"/><circle cx="6.7" cy="5.7" r="0.75"/></g><circle cx="4.3" cy="4.3" r="0.9" fill="#2b22c4"/></svg></div>
<div class="a t" style="left:270.60px;top:375.01px;font-size:8.00px;color:#fff;-webkit-text-stroke:0.1px #fff;transform:scaleX(1.0000);transform-origin:0 0;">if</div>
<div class="a" style="left:294px;top:372px;width:192px;height:19px;background:#77ab41;"></div>
<div class="a" style="left:289.75px;top:375.38px;width:4.5px;height:7px;background:#77ab41;border-radius:2px 0 0 2px"></div>
<div class="a" style="left:303px;top:374px;width:56px;height:14px;background:#d05b26;"></div>
<div class="a" style="left:299.10px;top:377.62px;width:4.5px;height:7px;background:#d05b26;border-radius:2px 0 0 2px"></div>
<div class="a t" style="left:308.50px;top:377.91px;font-size:8.00px;color:#fff;-webkit-text-stroke:0.1px #fff;transform:scaleX(1.0000);transform-origin:0 0;">get</div>
<div class="a" style="left:322.50px;top:376.75px;width:32.50px;height:8.15px;background:#e59a76;border-radius:2.5px"></div>
<div class="a t" style="left:325.00px;top:377.63px;font-size:8.00px;color:#1a1a1a;transform:scaleX(1.0000);transform-origin:0 0;">value</div>
<svg class="a" style="left:347.40px;top:379.22px" width="4" height="3"><path d="M0.3 0.4H3.7L2 2.6Z" fill="#d05b26"/></svg>
<div class="a" style="left:359px;top:374px;width:3px;height:14px;background:#77ab41;"></div>
<div class="a" style="left:361.25px;top:376.75px;width:18.50px;height:8.15px;background:#c9e0b0;border-radius:2.5px"></div>
<div class="a t" style="left:363.75px;top:377.63px;font-size:8.00px;color:#1a1a1a;transform:scaleX(1.0000);transform-origin:0 0;">=</div>
<svg class="a" style="left:372.15px;top:379.22px" width="4" height="3"><path d="M0.3 0.4H3.7L2 2.6Z" fill="#77ab41"/></svg>
<div class="a" style="left:387px;top:374px;width:99px;height:14px;background:#d05b26;"></div>
<div class="a" style="left:382.90px;top:377.62px;width:4.5px;height:7px;background:#d05b26;border-radius:2px 0 0 2px"></div>
<div class="a t" style="left:391.90px;top:377.91px;font-size:8.00px;color:#fff;-webkit-text-stroke:0.1px #fff;transform:scaleX(1.0000);transform-origin:0 0;">get</div>
<div class="a" style="left:405.60px;top:376.75px;width:80.40px;height:8.15px;background:#e59a76;border-radius:2.5px"></div>
<div class="a t" style="left:408.10px;top:377.63px;font-size:8.00px;color:#1a1a1a;transform:scaleX(1.0000);transform-origin:0 0;">global Wachtwoord</div>
<svg class="a" style="left:478.40px;top:379.22px" width="4" height="3"><path d="M0.3 0.4H3.7L2 2.6Z" fill="#d05b26"/></svg>
<div class="a t" style="left:256.50px;top:394.31px;font-size:8.00px;color:#fff;-webkit-text-stroke:0.1px #fff;transform:scaleX(1.0000);transform-origin:0 0;">then</div>
<div class="a" style="left:278px;top:391px;width:4px;height:4px;background:#b08e35;"></div>
<div class="a" style="left:278px;top:401px;width:4px;height:4px;background:#b08e35;"></div>
<div class="a" style="left:278px;top:391px;width:58px;height:14px;background:#7c5289;border-radius:4px 0 0 4px;"></div>
<div class="a t" style="left:283.10px;top:394.91px;font-size:8.00px;color:#fff;-webkit-text-stroke:0.1px #fff;transform:scaleX(1.0000);transform-origin:0 0;">call</div>
<div class="a" style="left:300.00px;top:394.00px;width:32.75px;height:8.25px;background:#cdbcd5;border-radius:2.5px"></div>
<div class="a t" style="left:302.50px;top:394.93px;font-size:8.00px;color:#1a1a1a;transform:scaleX(1.0000);transform-origin:0 0;">Done</div>
<svg class="a" style="left:325.15px;top:396.52px" width="4" height="3"><path d="M0.3 0.4H3.7L2 2.6Z" fill="#7c5289"/></svg>
<div class="a t" style="left:256.50px;top:415.81px;font-size:8.00px;color:#fff;-webkit-text-stroke:0.1px #fff;transform:scaleX(1.0000);transform-origin:0 0;">else</div>
<div class="a" style="left:278px;top:413px;width:4px;height:4px;background:#b08e35;"></div>
<div class="a" style="left:278px;top:464px;width:4px;height:4px;background:#b08e35;"></div>
<div class="a" style="left:278px;top:413px;width:150px;height:55px;background:#7c5289;border-radius:4px 0 0 4px;"></div>
<div class="a t" style="left:283.10px;top:416.31px;font-size:8.00px;color:#fff;-webkit-text-stroke:0.1px #fff;transform:scaleX(1.0000);transform-origin:0 0;">call</div>
<div class="a" style="left:300.00px;top:415.60px;width:38.10px;height:8.15px;background:#cdbcd5;border-radius:2.5px"></div>
<div class="a t" style="left:302.50px;top:416.48px;font-size:8.00px;color:#1a1a1a;transform:scaleX(1.0000);transform-origin:0 0;">Melder</div>
<svg class="a" style="left:330.50px;top:418.07px" width="4" height="3"><path d="M0.3 0.4H3.7L2 2.6Z" fill="#7c5289"/></svg>
<div class="a t" style="left:341.25px;top:416.31px;font-size:8.00px;color:#fff;-webkit-text-stroke:0.1px #fff;transform:scaleX(1.0000);transform-origin:0 0;">.ShowMessageDialog</div>
<div class="a t" style="left:117.50px;width:300.00px;text-align:right;top:429.91px;font-size:8.00px;color:#fff;-webkit-text-stroke:0.1px #fff;transform:scaleX(1.0000);transform-origin:300.00px 0">message</div>
<div class="a" style="left:428px;top:426px;width:72px;height:14px;background:#b32d5e;"></div>
<div class="a" style="left:423.50px;top:429.62px;width:4.5px;height:7px;background:#b32d5e;border-radius:2px 0 0 2px"></div>
<div class="a" style="left:438.75px;top:429.32px;width:71.25px;height:7.60px;background:#dba2bd;border-radius:2.5px"></div>
<div class="a t" style="left:440.95px;top:429.93px;font-size:8.00px;color:#1a1a1a;transform:scaleX(1.0000);transform-origin:0 0;">Foute informatie</div>
<svg class="a" style="left:433.75px;top:428.82px" width="2.4" height="2.4"><rect width="2.4" height="2.4" fill="#f3dbe6"/></svg>
<svg class="a" style="left:512.80px;top:428.82px" width="2.4" height="2.4"><rect width="2.4" height="2.4" fill="#f3dbe6"/></svg>
<div class="a t" style="left:117.50px;width:300.00px;text-align:right;top:443.91px;font-size:8.00px;color:#fff;-webkit-text-stroke:0.1px #fff;transform:scaleX(1.0000);transform-origin:300.00px 0">title</div>
<div class="a" style="left:428px;top:441px;width:72px;height:13px;background:#b32d5e;"></div>
<div class="a" style="left:423.50px;top:443.55px;width:4.5px;height:7px;background:#b32d5e;border-radius:2px 0 0 2px"></div>
<div class="a" style="left:438.75px;top:443.25px;width:43.25px;height:7.60px;background:#dba2bd;border-radius:2.5px"></div>
<div class="a t" style="left:440.95px;top:443.86px;font-size:8.00px;color:#1a1a1a;transform:scaleX(1.0000);transform-origin:0 0;">Login error</div>
<svg class="a" style="left:433.75px;top:442.75px" width="2.4" height="2.4"><rect width="2.4" height="2.4" fill="#f3dbe6"/></svg>
<svg class="a" style="left:484.80px;top:442.75px" width="2.4" height="2.4"><rect width="2.4" height="2.4" fill="#f3dbe6"/></svg>
<div class="a t" style="left:117.50px;width:300.00px;text-align:right;top:457.81px;font-size:8.00px;color:#fff;-webkit-text-stroke:0.1px #fff;transform:scaleX(1.0000);transform-origin:300.00px 0">buttonText</div>
<div class="a" style="left:428px;top:455px;width:38px;height:13px;background:#b32d5e;"></div>
<div class="a" style="left:423.50px;top:457.62px;width:4.5px;height:7px;background:#b32d5e;border-radius:2px 0 0 2px"></div>
<div class="a" style="left:438.75px;top:457.32px;width:16.00px;height:7.60px;background:#dba2bd;border-radius:2.5px"></div>
<div class="a t" style="left:440.95px;top:457.93px;font-size:8.00px;color:#1a1a1a;transform:scaleX(1.0000);transform-origin:0 0;">OK</div>
<svg class="a" style="left:433.75px;top:456.82px" width="2.4" height="2.4"><rect width="2.4" height="2.4" fill="#f3dbe6"/></svg>
<svg class="a" style="left:457.55px;top:456.82px" width="2.4" height="2.4"><rect width="2.4" height="2.4" fill="#f3dbe6"/></svg>
<svg class="a" style="left:231.90px;top:350.45px" width="9" height="3.5"><path d="M0 0L3 2.6H6L9 0Z" fill="#b08e35"/></svg>
<div class="a" style="left:223.80px;top:476.90px;width:7px;height:6px;border-left:1px solid rgba(255,255,255,0.85);border-bottom:1px solid rgba(255,255,255,0.85);border-bottom-left-radius:5px"></div>
<svg class="a" style="left:231.50px;top:481.20px" width="9" height="4"><path d="M0 0L3 3.2H6L9 0Z" fill="#b08e35"/></svg>
<svg class="a" style="left:258.75px;top:370.80px" width="9" height="3.5"><path d="M0 0L3 2.6H6L9 0Z" fill="#b08e35"/></svg>
<div class="a" style="left:250.80px;top:469.75px;width:7px;height:6px;border-left:1px solid rgba(255,255,255,0.85);border-bottom:1px solid rgba(255,255,255,0.85);border-bottom-left-radius:5px"></div>
<svg class="a" style="left:258.50px;top:474.00px" width="9" height="4"><path d="M0 0L3 3.2H6L9 0Z" fill="#b08e35"/></svg>
<svg class="a" style="left:285.60px;top:390.95px" width="9" height="3.5"><path d="M0 0L3 2.6H6L9 0Z" fill="#b08e35"/></svg>
<div class="a" style="left:277.80px;top:399.75px;width:7px;height:6px;border-left:1px solid rgba(255,255,255,0.85);border-bottom:1px solid rgba(255,255,255,0.85);border-bottom-left-radius:5px"></div>
<svg class="a" style="left:285.00px;top:404.00px" width="9" height="4"><path d="M0 0L3 3.2H6L9 0Z" fill="#7c5289"/></svg>
<svg class="a" style="left:285.60px;top:412.80px" width="9" height="3.5"><path d="M0 0L3 2.6H6L9 0Z" fill="#b08e35"/></svg>
<div class="a" style="left:277.80px;top:462.50px;width:7px;height:6px;border-left:1px solid rgba(255,255,255,0.85);border-bottom:1px solid rgba(255,255,255,0.85);border-bottom-left-radius:5px"></div>
<svg class="a" style="left:285.00px;top:466.80px" width="9" height="4"><path d="M0 0L3 3.2H6L9 0Z" fill="#7c5289"/></svg>
<div class="a" style="left:851px;top:273px;width:108px;height:13px;background:#7c5289;border-radius:4px 0 0 0;"></div>
<div class="a" style="left:851px;top:286px;width:20px;height:153px;background:#7c5289;border-radius:0 0 0 4px;"></div>
<div class="a" style="left:851px;top:434px;width:108px;height:5px;background:#7c5289;border-radius:0 0 0 4px;"></div>
<div class="a" style="left:856.00px;top:275.50px;width:8.6px;height:8.6px;background:#2b22c4;border-radius:2px;box-shadow:0 0 0 0.5px rgba(255,255,230,0.45)"><svg width="8.6" height="8.6" style="display:block"><circle cx="4.3" cy="4.3" r="2.2" fill="none" stroke="#f4f0d8" stroke-width="1.2"/><g fill="#f4f0d8"><circle cx="4.3" cy="1.5" r="0.75"/><circle cx="4.3" cy="7.1" r="0.75"/><circle cx="1.9" cy="2.9" r="0.75"/><circle cx="6.7" cy="2.9" r="0.75"/><circle cx="1.9" cy="5.7" r="0.75"/><circle cx="6.7" cy="5.7" r="0.75"/></g><circle cx="4.3" cy="4.3" r="0.9" fill="#2b22c4"/></svg></div>
<div class="a t" style="left:870.60px;top:276.56px;font-size:8.00px;color:#fff;-webkit-text-stroke:0.1px #fff;transform:scaleX(1.0000);transform-origin:0 0;">to</div>
<div class="a" style="left:880.00px;top:275.25px;width:33.75px;height:8.75px;background:#cdbcd5;border-radius:2.5px"></div>
<div class="a t" style="left:882.50px;top:276.43px;font-size:8.00px;color:#1a1a1a;transform:scaleX(1.0000);transform-origin:0 0;">toegang</div>
<div class="a" style="left:921.00px;top:275.25px;width:35.00px;height:8.75px;background:#e8a27c;border-radius:2.5px"></div>
<div class="a t" style="left:923.50px;top:276.43px;font-size:8.00px;color:#1a1a1a;transform:scaleX(1.0000);transform-origin:0 0;">calledby</div>
<div class="a t" style="left:856.00px;top:289.91px;font-size:8.00px;color:#fff;-webkit-text-stroke:0.1px #fff;transform:scaleX(1.0000);transform-origin:0 0;">do</div>
<div class="a" style="left:871px;top:286px;width:4px;height:4px;background:#7c5289;"></div>
<div class="a" style="left:871px;top:429px;width:4px;height:4px;background:#7c5289;"></div>
<div class="a" style="left:871px;top:286px;width:43px;height:21px;background:#b08e35;border-radius:4px 0 0 0;"></div>
<div class="a" style="left:871px;top:307px;width:27px;height:126px;background:#b08e35;"></div>
<div class="a" style="left:871px;top:363px;width:43px;height:7px;background:#b08e35;"></div>
<div class="a" style="left:871px;top:426px;width:43px;height:7px;background:#b08e35;border-radius:0 0 0 3px;"></div>
<div class="a" style="left:871px;top:286px;width:1px;height:146px;background:rgba(255,255,255,0.28);"></div>
<div class="a" style="left:876.25px;top:289.50px;width:8.6px;height:8.6px;background:#2b22c4;border-radius:2px;box-shadow:0 0 0 0.5px rgba(255,255,230,0.45)"><svg width="8.6" height="8.6" style="display:block"><circle cx="4.3" cy="4.3" r="2.2" fill="none" stroke="#f4f0d8" stroke-width="1.2"/><g fill="#f4f0d8"><circle cx="4.3" cy="1.5" r="0.75"/><circle cx="4.3" cy="7.1" r="0.75"/><circle cx="1.9" cy="2.9" r="0.75"/><circle cx="6.7" cy="2.9" r="0.75"/><circle cx="1.9" cy="5.7" r="0.75"/><circle cx="6.7" cy="5.7" r="0.75"/></g><circle cx="4.3" cy="4.3" r="0.9" fill="#2b22c4"/></svg></div>
<div class="a t" style="left:891.00px;top:290.21px;font-size:8.00px;color:#fff;-webkit-text-stroke:0.1px #fff;transform:scaleX(1.0000);transform-origin:0 0;">if</div>
<div class="a" style="left:914px;top:287px;width:389px;height:19px;background:#77ab41;"></div>
<div class="a" style="left:909.50px;top:290.95px;width:4.5px;height:7px;background:#77ab41;border-radius:2px 0 0 2px"></div>
<div class="a" style="left:922.5px;top:289.75px;width:27px;height:14px;border:0.8px solid rgba(255,255,255,0.25);border-right:0"></div>
<div class="a t" style="left:927.75px;top:293.41px;font-size:8.00px;color:#fff;-webkit-text-stroke:0.1px #fff;transform:scaleX(1.0000);transform-origin:0 0;">not</div>
<div class="a" style="left:949px;top:290px;width:45px;height:14px;background:#b32d5e;"></div>
<div class="a" style="left:945.40px;top:293.12px;width:4.5px;height:7px;background:#b32d5e;border-radius:2px 0 0 2px"></div>
<div class="a t" style="left:954.75px;top:293.41px;font-size:8.00px;color:#fff;-webkit-text-stroke:0.1px #fff;transform:scaleX(1.0000);transform-origin:0 0;">is empty</div>
<div class="a" style="left:994px;top:290px;width:92px;height:14px;background:#439970;"></div>
<div class="a" style="left:990.40px;top:293.12px;width:4.5px;height:7px;background:#439970;border-radius:2px 0 0 2px"></div>
<div class="a" style="left:997.25px;top:292.50px;width:49.00px;height:8.10px;background:#b3d8c6;border-radius:2.5px"></div>
<div class="a t" style="left:999.75px;top:293.36px;font-size:8.00px;color:#1a1a1a;transform:scaleX(1.0000);transform-origin:0 0;">username</div>
<svg class="a" style="left:1038.65px;top:294.95px" width="4" height="3"><path d="M0.3 0.4H3.7L2 2.6Z" fill="#439970"/></svg>
<div class="a t" style="left:1049.50px;top:293.81px;font-size:8.00px;color:#fff;-webkit-text-stroke:0.1px #fff;transform:scaleX(1.0000);transform-origin:0 0;">.</div>
<div class="a" style="left:1054.00px;top:292.50px;width:28.50px;height:8.10px;background:#b3d8c6;border-radius:2.5px"></div>
<div class="a t" style="left:1056.50px;top:293.36px;font-size:8.00px;color:#1a1a1a;transform:scaleX(1.0000);transform-origin:0 0;">Text</div>
<svg class="a" style="left:1074.90px;top:294.95px" width="4" height="3"><path d="M0.3 0.4H3.7L2 2.6Z" fill="#439970"/></svg>
<div class="a" style="left:1088.75px;top:291.90px;width:26.85px;height:8.35px;background:#c9e0b0;border-radius:2.5px"></div>
<div class="a t" style="left:1091.25px;top:292.88px;font-size:8.00px;color:#1a1a1a;transform:scaleX(1.0000);transform-origin:0 0;">and</div>
<svg class="a" style="left:1108.00px;top:294.47px" width="4" height="3"><path d="M0.3 0.4H3.7L2 2.6Z" fill="#77ab41"/></svg>
<div class="a" style="left:1122.5px;top:289.75px;width:27px;height:14px;border:0.8px solid rgba(255,255,255,0.25);border-right:0"></div>
<div class="a t" style="left:1127.50px;top:293.41px;font-size:8.00px;color:#fff;-webkit-text-stroke:0.1px #fff;transform:scaleX(1.0000);transform-origin:0 0;">not</div>
<div class="a" style="left:1149px;top:290px;width:45px;height:14px;background:#b32d5e;"></div>
<div class="a" style="left:1145.00px;top:293.12px;width:4.5px;height:7px;background:#b32d5e;border-radius:2px 0 0 2px"></div>
<div class="a t" style="left:1154.40px;top:293.41px;font-size:8.00px;color:#fff;-webkit-text-stroke:0.1px #fff;transform:scaleX(1.0000);transform-origin:0 0;">is empty</div>
<div class="a" style="left:1194px;top:290px;width:103px;height:14px;background:#439970;"></div>
<div class="a" style="left:1190.00px;top:293.12px;width:4.5px;height:7px;background:#439970;border-radius:2px 0 0 2px"></div>
<div class="a" style="left:1196.90px;top:292.50px;width:60.60px;height:8.10px;background:#b3d8c6;border-radius:2.5px"></div>
<div class="a t" style="left:1199.40px;top:293.36px;font-size:8.00px;color:#1a1a1a;transform:scaleX(1.0000);transform-origin:0 0;">wachtwoord1</div>
<svg class="a" style="left:1249.90px;top:294.95px" width="4" height="3"><path d="M0.3 0.4H3.7L2 2.6Z" fill="#439970"/></svg>
<div class="a t" style="left:1260.50px;top:293.81px;font-size:8.00px;color:#fff;-webkit-text-stroke:0.1px #fff;transform:scaleX(1.0000);transform-origin:0 0;">.</div>
<div class="a" style="left:1265.00px;top:292.50px;width:28.75px;height:8.10px;background:#b3d8c6;border-radius:2.5px"></div>
<div class="a t" style="left:1267.50px;top:293.36px;font-size:8.00px;color:#1a1a1a;transform:scaleX(1.0000);transform-origin:0 0;">Text</div>
<svg class="a" style="left:1286.15px;top:294.95px" width="4" height="3"><path d="M0.3 0.4H3.7L2 2.6Z" fill="#439970"/></svg>
<div class="a t" style="left:876.00px;top:309.91px;font-size:8.00px;color:#fff;-webkit-text-stroke:0.1px #fff;transform:scaleX(1.0000);transform-origin:0 0;">then</div>
<div class="a" style="left:898px;top:307px;width:4px;height:4px;background:#b08e35;"></div>
<div class="a" style="left:898px;top:359px;width:4px;height:4px;background:#b08e35;"></div>
<div class="a" style="left:898px;top:307px;width:96px;height:13px;background:#d05b26;border-radius:4px 0 0 0;"></div>
<div class="a t" style="left:902.75px;top:310.21px;font-size:8.00px;color:#fff;-webkit-text-stroke:0.1px #fff;transform:scaleX(1.0000);transform-origin:0 0;">set</div>
<div class="a" style="left:916.25px;top:309.60px;width:58.15px;height:8.00px;background:#e59a76;border-radius:2.5px"></div>
<div class="a t" style="left:918.75px;top:310.41px;font-size:8.00px;color:#1a1a1a;transform:scaleX(1.0000);transform-origin:0 0;">global status</div>
<svg class="a" style="left:966.80px;top:312.00px" width="4" height="3"><path d="M0.3 0.4H3.7L2 2.6Z" fill="#d05b26"/></svg>
<div class="a t" style="left:977.25px;top:310.21px;font-size:8.00px;color:#fff;-webkit-text-stroke:0.1px #fff;transform:scaleX(1.0000);transform-origin:0 0;">to</div>
<div class="a" style="left:994px;top:307px;width:65px;height:13px;background:#d05b26;"></div>
<div class="a" style="left:990.40px;top:309.95px;width:4.5px;height:7px;background:#d05b26;border-radius:2px 0 0 2px"></div>
<div class="a" style="left:990px;top:309px;width:1px;height:9px;background:rgba(255,255,255,0.3);"></div>
<div class="a t" style="left:999.75px;top:310.21px;font-size:8.00px;color:#fff;-webkit-text-stroke:0.1px #fff;transform:scaleX(1.0000);transform-origin:0 0;">get</div>
<div class="a" style="left:1013.00px;top:309.60px;width:43.25px;height:8.00px;background:#e59a76;border-radius:2.5px"></div>
<div class="a t" style="left:1015.50px;top:310.41px;font-size:8.00px;color:#1a1a1a;transform:scaleX(1.0000);transform-origin:0 0;">calledby</div>
<svg class="a" style="left:1048.65px;top:312.00px" width="4" height="3"><path d="M0.3 0.4H3.7L2 2.6Z" fill="#d05b26"/></svg>
<div class="a" style="left:898px;top:320px;width:116px;height:14px;background:#d05b26;"></div>
<div class="a t" style="left:902.75px;top:324.06px;font-size:8.00px;color:#fff;-webkit-text-stroke:0.1px #fff;transform:scaleX(1.0000);transform-origin:0 0;">set</div>
<div class="a" style="left:916.25px;top:323.20px;width:77.75px;height:8.20px;background:#e59a76;border-radius:2.5px"></div>
<div class="a t" style="left:918.75px;top:324.11px;font-size:8.00px;color:#1a1a1a;transform:scaleX(1.0000);transform-origin:0 0;">global User_name</div>
<svg class="a" style="left:986.40px;top:325.70px" width="4" height="3"><path d="M0.3 0.4H3.7L2 2.6Z" fill="#d05b26"/></svg>
<div class="a t" style="left:997.50px;top:324.06px;font-size:8.00px;color:#fff;-webkit-text-stroke:0.1px #fff;transform:scaleX(1.0000);transform-origin:0 0;">to</div>
<div class="a" style="left:1014px;top:321px;width:60px;height:13px;background:#b32d5e;"></div>
<div class="a" style="left:1010.40px;top:323.80px;width:4.5px;height:7px;background:#b32d5e;border-radius:2px 0 0 2px"></div>
<div class="a" style="left:1016.90px;top:323.20px;width:49.10px;height:8.20px;background:#dba2bd;border-radius:2.5px"></div>
<div class="a t" style="left:1019.40px;top:324.11px;font-size:8.00px;color:#1a1a1a;transform:scaleX(1.0000);transform-origin:0 0;">downcase</div>
<svg class="a" style="left:1058.40px;top:325.70px" width="4" height="3"><path d="M0.3 0.4H3.7L2 2.6Z" fill="#b32d5e"/></svg>
<div class="a" style="left:1074px;top:321px;width:91px;height:13px;background:#439970;"></div>
<div class="a" style="left:1070.00px;top:324.00px;width:4.5px;height:7px;background:#439970;border-radius:2px 0 0 2px"></div>
<div class="a" style="left:1076.90px;top:323.40px;width:48.70px;height:8.00px;background:#b3d8c6;border-radius:2.5px"></div>
<div class="a t" style="left:1079.40px;top:324.21px;font-size:8.00px;color:#1a1a1a;transform:scaleX(1.0000);transform-origin:0 0;">username</div>
<svg class="a" style="left:1118.00px;top:325.80px" width="4" height="3"><path d="M0.3 0.4H3.7L2 2.6Z" fill="#439970"/></svg>
<div class="a t" style="left:1129.50px;top:324.31px;font-size:8.00px;color:#fff;-webkit-text-stroke:0.1px #fff;transform:scaleX(1.0000);transform-origin:0 0;">.</div>
<div class="a" style="left:1133.75px;top:323.40px;width:28.15px;height:8.00px;background:#b3d8c6;border-radius:2.5px"></div>
<div class="a t" style="left:1136.25px;top:324.21px;font-size:8.00px;color:#1a1a1a;transform:scaleX(1.0000);transform-origin:0 0;">Text</div>
<svg class="a" style="left:1154.30px;top:325.80px" width="4" height="3"><path d="M0.3 0.4H3.7L2 2.6Z" fill="#439970"/></svg>
<div class="a" style="left:898px;top:334px;width:119px;height:14px;background:#d05b26;"></div>
<div class="a t" style="left:902.75px;top:338.31px;font-size:8.00px;color:#fff;-webkit-text-stroke:0.1px #fff;transform:scaleX(1.0000);transform-origin:0 0;">set</div>
<div class="a" style="left:916.25px;top:337.50px;width:80.65px;height:8.00px;background:#e59a76;border-radius:2.5px"></div>
<div class="a t" style="left:918.75px;top:338.31px;font-size:8.00px;color:#1a1a1a;transform:scaleX(1.0000);transform-origin:0 0;">global Wachtwoord</div>
<svg class="a" style="left:989.30px;top:339.90px" width="4" height="3"><path d="M0.3 0.4H3.7L2 2.6Z" fill="#d05b26"/></svg>
<div class="a t" style="left:999.75px;top:338.31px;font-size:8.00px;color:#fff;-webkit-text-stroke:0.1px #fff;transform:scaleX(1.0000);transform-origin:0 0;">to</div>
<div class="a" style="left:1017px;top:335px;width:103px;height:13px;background:#439970;"></div>
<div class="a" style="left:1012.90px;top:338.05px;width:4.5px;height:7px;background:#439970;border-radius:2px 0 0 2px"></div>
<div class="a" style="left:1019.40px;top:337.50px;width:60.60px;height:8.00px;background:#b3d8c6;border-radius:2.5px"></div>
<div class="a t" style="left:1021.90px;top:338.31px;font-size:8.00px;color:#1a1a1a;transform:scaleX(1.0000);transform-origin:0 0;">wachtwoord1</div>
<svg class="a" style="left:1072.40px;top:339.90px" width="4" height="3"><path d="M0.3 0.4H3.7L2 2.6Z" fill="#439970"/></svg>
<div class="a t" style="left:1083.50px;top:338.31px;font-size:8.00px;color:#fff;-webkit-text-stroke:0.1px #fff;transform:scaleX(1.0000);transform-origin:0 0;">.</div>
<div class="a" style="left:1088.10px;top:337.50px;width:28.15px;height:8.00px;background:#b3d8c6;border-radius:2.5px"></div>
<div class="a t" style="left:1090.60px;top:338.31px;font-size:8.00px;color:#1a1a1a;transform:scaleX(1.0000);transform-origin:0 0;">Text</div>
<svg class="a" style="left:1108.65px;top:339.90px" width="4" height="3"><path d="M0.3 0.4H3.7L2 2.6Z" fill="#439970"/></svg>
<div class="a" style="left:898px;top:348px;width:207px;height:15px;background:#7c5289;border-radius:0 0 0 4px;"></div>
<div class="a t" style="left:902.75px;top:351.81px;font-size:8.00px;color:#fff;-webkit-text-stroke:0.1px #fff;transform:scaleX(1.0000);transform-origin:0 0;">call</div>
<div class="a" style="left:919.75px;top:351.00px;width:135.85px;height:8.20px;background:#cdbcd5;border-radius:2.5px"></div>
<div class="a t" style="left:922.25px;top:351.91px;font-size:8.00px;color:#1a1a1a;transform:scaleX(1.0000);transform-origin:0 0;">wachtwoord_en_username_opslag</div>
<svg class="a" style="left:1048.00px;top:353.50px" width="4" height="3"><path d="M0.3 0.4H3.7L2 2.6Z" fill="#7c5289"/></svg>
<div class="a t" style="left:1059.40px;top:351.81px;font-size:8.00px;color:#fff;-webkit-text-stroke:0.1px #fff;transform:scaleX(1.0000);transform-origin:0 0;">.GetTagList</div>
<div class="a t" style="left:876.00px;top:373.31px;font-size:8.00px;color:#fff;-webkit-text-stroke:0.1px #fff;transform:scaleX(1.0000);transform-origin:0 0;">else</div>
<div class="a" style="left:898px;top:370px;width:4px;height:4px;background:#b08e35;"></div>
<div class="a" style="left:898px;top:422px;width:4px;height:4px;background:#b08e35;"></div>
<div class="a" style="left:898px;top:370px;width:149px;height:56px;background:#7c5289;border-radius:4px 0 0 4px;"></div>
<div class="a t" style="left:902.75px;top:373.81px;font-size:8.00px;color:#fff;-webkit-text-stroke:0.1px #fff;transform:scaleX(1.0000);transform-origin:0 0;">call</div>
<div class="a" style="left:919.75px;top:373.10px;width:37.75px;height:7.90px;background:#cdbcd5;border-radius:2.5px"></div>
<div class="a t" style="left:922.25px;top:373.86px;font-size:8.00px;color:#1a1a1a;transform:scaleX(1.0000);transform-origin:0 0;">Melder</div>
<svg class="a" style="left:949.90px;top:375.45px" width="4" height="3"><path d="M0.3 0.4H3.7L2 2.6Z" fill="#7c5289"/></svg>
<div class="a t" style="left:960.60px;top:373.81px;font-size:8.00px;color:#fff;-webkit-text-stroke:0.1px #fff;transform:scaleX(1.0000);transform-origin:0 0;">.ShowMessageDialog</div>
<div class="a t" style="left:736.90px;width:300.00px;text-align:right;top:387.41px;font-size:8.00px;color:#fff;-webkit-text-stroke:0.1px #fff;transform:scaleX(1.0000);transform-origin:300.00px 0">message</div>
<div class="a" style="left:1047px;top:384px;width:95px;height:13px;background:#b32d5e;"></div>
<div class="a" style="left:1042.90px;top:386.95px;width:4.5px;height:7px;background:#b32d5e;border-radius:2px 0 0 2px"></div>
<div class="a" style="left:1058.10px;top:386.65px;width:72.50px;height:7.60px;background:#dba2bd;border-radius:2.5px"></div>
<div class="a t" style="left:1060.30px;top:387.26px;font-size:8.00px;color:#1a1a1a;transform:scaleX(1.0000);transform-origin:0 0;">Vul de informatie in</div>
<svg class="a" style="left:1053.10px;top:386.15px" width="2.4" height="2.4"><rect width="2.4" height="2.4" fill="#f3dbe6"/></svg>
<svg class="a" style="left:1133.40px;top:386.15px" width="2.4" height="2.4"><rect width="2.4" height="2.4" fill="#f3dbe6"/></svg>
<div class="a t" style="left:736.90px;width:300.00px;text-align:right;top:400.91px;font-size:8.00px;color:#fff;-webkit-text-stroke:0.1px #fff;transform:scaleX(1.0000);transform-origin:300.00px 0">title</div>
<div class="a" style="left:1047px;top:398px;width:41px;height:13px;background:#b32d5e;"></div>
<div class="a" style="left:1042.90px;top:401.00px;width:4.5px;height:7px;background:#b32d5e;border-radius:2px 0 0 2px"></div>
<div class="a" style="left:1058.00px;top:400.70px;width:18.40px;height:7.60px;background:#dba2bd;border-radius:2.5px"></div>
<div class="a t" style="left:1060.20px;top:401.31px;font-size:8.00px;color:#1a1a1a;transform:scaleX(1.0000);transform-origin:0 0;">Info</div>
<svg class="a" style="left:1053.00px;top:400.20px" width="2.4" height="2.4"><rect width="2.4" height="2.4" fill="#f3dbe6"/></svg>
<svg class="a" style="left:1079.20px;top:400.20px" width="2.4" height="2.4"><rect width="2.4" height="2.4" fill="#f3dbe6"/></svg>
<div class="a t" style="left:736.90px;width:300.00px;text-align:right;top:415.11px;font-size:8.00px;color:#fff;-webkit-text-stroke:0.1px #fff;transform:scaleX(1.0000);transform-origin:300.00px 0">buttonText</div>
<div class="a" style="left:1047px;top:411px;width:39px;height:15px;background:#b32d5e;"></div>
<div class="a" style="left:1042.90px;top:414.95px;width:4.5px;height:7px;background:#b32d5e;border-radius:2px 0 0 2px"></div>
<div class="a" style="left:1058.00px;top:414.65px;width:16.60px;height:7.60px;background:#dba2bd;border-radius:2.5px"></div>
<div class="a t" style="left:1060.20px;top:415.26px;font-size:8.00px;color:#1a1a1a;transform:scaleX(1.0000);transform-origin:0 0;">OK</div>
<svg class="a" style="left:1053.00px;top:414.15px" width="2.4" height="2.4"><rect width="2.4" height="2.4" fill="#f3dbe6"/></svg>
<svg class="a" style="left:1077.40px;top:414.15px" width="2.4" height="2.4"><rect width="2.4" height="2.4" fill="#f3dbe6"/></svg>
<svg class="a" style="left:878.10px;top:285.95px" width="9" height="3.5"><path d="M0 0L3 2.6H6L9 0Z" fill="#7c5289"/></svg>
<div class="a" style="left:870.80px;top:427.50px;width:7px;height:6px;border-left:1px solid rgba(255,255,255,0.85);border-bottom:1px solid rgba(255,255,255,0.85);border-bottom-left-radius:5px"></div>
<svg class="a" style="left:877.50px;top:431.80px" width="9" height="4"><path d="M0 0L3 3.2H6L9 0Z" fill="#b08e35"/></svg>
<svg class="a" style="left:905.60px;top:306.60px" width="9" height="3.5"><path d="M0 0L3 2.6H6L9 0Z" fill="#b08e35"/></svg>
<div class="a" style="left:897.80px;top:357.75px;width:7px;height:6px;border-left:1px solid rgba(255,255,255,0.85);border-bottom:1px solid rgba(255,255,255,0.85);border-bottom-left-radius:5px"></div>
<svg class="a" style="left:905.00px;top:319.30px" width="9" height="4"><path d="M0 0L3 3.2H6L9 0Z" fill="#d05b26"/></svg>
<svg class="a" style="left:905.00px;top:333.50px" width="9" height="4"><path d="M0 0L3 3.2H6L9 0Z" fill="#d05b26"/></svg>
<svg class="a" style="left:905.00px;top:346.80px" width="9" height="4"><path d="M0 0L3 3.2H6L9 0Z" fill="#d05b26"/></svg>
<svg class="a" style="left:905.00px;top:362.00px" width="9" height="4"><path d="M0 0L3 3.2H6L9 0Z" fill="#7c5289"/></svg>
<svg class="a" style="left:905.60px;top:369.95px" width="9" height="3.5"><path d="M0 0L3 2.6H6L9 0Z" fill="#b08e35"/></svg>
<div class="a" style="left:897.80px;top:420.60px;width:7px;height:6px;border-left:1px solid rgba(255,255,255,0.85);border-bottom:1px solid rgba(255,255,255,0.85);border-bottom-left-radius:5px"></div>
<svg class="a" style="left:905.00px;top:424.90px" width="9" height="4"><path d="M0 0L3 3.2H6L9 0Z" fill="#7c5289"/></svg>
<div class="a" style="left:486px;top:180px;width:201px;height:28px;background:#b08e35;border-radius:4px 0 0 0;"></div>
<div class="a" style="left:486px;top:208px;width:20px;height:293px;background:#b08e35;border-radius:0 0 0 4px;"></div>
<div class="a" style="left:486px;top:495px;width:201px;height:6px;background:#b08e35;border-radius:0 0 0 4px;"></div>
<div class="a t" style="left:491.00px;top:184.06px;font-size:8.00px;color:#fff;-webkit-text-stroke:0.1px #fff;transform:scaleX(1.0000);transform-origin:0 0;">when</div>
<div class="a" style="left:515.25px;top:183.50px;width:136.00px;height:7.75px;background:#e7dcb4;border-radius:2.5px"></div>
<div class="a t" style="left:517.75px;top:184.18px;font-size:8.00px;color:#1a1a1a;transform:scaleX(1.0000);transform-origin:0 0;">wachtwoord_en_username_opslag</div>
<svg class="a" style="left:643.65px;top:185.78px" width="4" height="3"><path d="M0.3 0.4H3.7L2 2.6Z" fill="#b08e35"/></svg>
<div class="a t" style="left:654.75px;top:184.06px;font-size:8.00px;color:#fff;-webkit-text-stroke:0.1px #fff;transform:scaleX(1.0000);transform-origin:0 0;">.TagList</div>
<div class="a" style="left:495.25px;top:196.25px;width:25.35px;height:9.00px;background:#e8a27c;border-radius:2.5px"></div>
<div class="a t" style="left:497.75px;top:197.56px;font-size:8.00px;color:#1a1a1a;transform:scaleX(1.0000);transform-origin:0 0;">value</div>
<div class="a t" style="left:491.00px;top:211.21px;font-size:8.00px;color:#fff;-webkit-text-stroke:0.1px #fff;transform:scaleX(1.0000);transform-origin:0 0;">do</div>
<div class="a" style="left:506px;top:208px;width:4px;height:4px;background:#b08e35;"></div>
<div class="a" style="left:506px;top:489px;width:4px;height:4px;background:#b08e35;"></div>
<div class="a" style="left:506px;top:208px;width:95px;height:14px;background:#d05b26;border-radius:4px 0 0 0;"></div>
<div class="a t" style="left:511.00px;top:211.41px;font-size:8.00px;color:#fff;-webkit-text-stroke:0.1px #fff;transform:scaleX(1.0000);transform-origin:0 0;">set</div>
<div class="a" style="left:524.75px;top:210.60px;width:56.25px;height:8.15px;background:#e59a76;border-radius:2.5px"></div>
<div class="a t" style="left:527.25px;top:211.48px;font-size:8.00px;color:#1a1a1a;transform:scaleX(1.0000);transform-origin:0 0;">global users</div>
<svg class="a" style="left:573.40px;top:213.08px" width="4" height="3"><path d="M0.3 0.4H3.7L2 2.6Z" fill="#d05b26"/></svg>
<div class="a t" style="left:583.75px;top:211.41px;font-size:8.00px;color:#fff;-webkit-text-stroke:0.1px #fff;transform:scaleX(1.0000);transform-origin:0 0;">to</div>
<div class="a" style="left:601px;top:208px;width:55px;height:14px;background:#d05b26;"></div>
<div class="a" style="left:597.00px;top:211.30px;width:4.5px;height:7px;background:#d05b26;border-radius:2px 0 0 2px"></div>
<div class="a" style="left:597px;top:210px;width:1px;height:10px;background:rgba(255,255,255,0.3);"></div>
<div class="a t" style="left:605.60px;top:211.41px;font-size:8.00px;color:#fff;-webkit-text-stroke:0.1px #fff;transform:scaleX(1.0000);transform-origin:0 0;">get</div>
<div class="a" style="left:620.00px;top:210.60px;width:32.75px;height:8.15px;background:#e59a76;border-radius:2.5px"></div>
<div class="a t" style="left:622.50px;top:211.48px;font-size:8.00px;color:#1a1a1a;transform:scaleX(1.0000);transform-origin:0 0;">value</div>
<svg class="a" style="left:645.15px;top:213.08px" width="4" height="3"><path d="M0.3 0.4H3.7L2 2.6Z" fill="#d05b26"/></svg>
<div class="a" style="left:506px;top:222px;width:43px;height:28px;background:#b08e35;"></div>
<div class="a" style="left:506px;top:250px;width:27px;height:244px;background:#b08e35;"></div>
<div class="a" style="left:506px;top:409px;width:43px;height:8px;background:#b08e35;"></div>
<div class="a" style="left:506px;top:486px;width:43px;height:7px;background:#b08e35;border-radius:0 0 0 3px;"></div>
<div class="a" style="left:506px;top:222px;width:1px;height:271px;background:rgba(255,255,255,0.28);"></div>
<div class="a" style="left:511.90px;top:224.75px;width:8.6px;height:8.6px;background:#2b22c4;border-radius:2px;box-shadow:0 0 0 0.5px rgba(255,255,230,0.45)"><svg width="8.6" height="8.6" style="display:block"><circle cx="4.3" cy="4.3" r="2.2" fill="none" stroke="#f4f0d8" stroke-width="1.2"/><g fill="#f4f0d8"><circle cx="4.3" cy="1.5" r="0.75"/><circle cx="4.3" cy="7.1" r="0.75"/><circle cx="1.9" cy="2.9" r="0.75"/><circle cx="6.7" cy="2.9" r="0.75"/><circle cx="1.9" cy="5.7" r="0.75"/><circle cx="6.7" cy="5.7" r="0.75"/></g><circle cx="4.3" cy="4.3" r="0.9" fill="#2b22c4"/></svg></div>
<div class="a t" style="left:526.00px;top:225.71px;font-size:8.00px;color:#fff;-webkit-text-stroke:0.1px #fff;transform:scaleX(1.0000);transform-origin:0 0;">if</div>
<div class="a t" style="left:511.00px;top:253.06px;font-size:8.00px;color:#fff;-webkit-text-stroke:0.1px #fff;transform:scaleX(1.0000);transform-origin:0 0;">then</div>
<div class="a" style="left:549px;top:222px;width:65px;height:28px;background:#4aa5d5;"></div>
<div class="a" style="left:544.50px;top:225.25px;width:4.5px;height:7px;background:#4aa5d5;border-radius:2px 0 0 2px"></div>
<div class="a t" style="left:554.00px;top:225.56px;font-size:8.00px;color:#fff;-webkit-text-stroke:0.1px #fff;transform:scaleX(1.0000);transform-origin:0 0;">is in list? thing</div>
<div class="a t" style="left:303.75px;width:300.00px;text-align:right;top:239.56px;font-size:8.00px;color:#fff;-webkit-text-stroke:0.1px #fff;transform:scaleX(1.0000);transform-origin:300.00px 0">list</div>
<div class="a" style="left:614px;top:222px;width:100px;height:14px;background:#d05b26;"></div>
<div class="a" style="left:610.00px;top:225.43px;width:4.5px;height:7px;background:#d05b26;border-radius:2px 0 0 2px"></div>
<div class="a t" style="left:618.75px;top:225.71px;font-size:8.00px;color:#fff;-webkit-text-stroke:0.1px #fff;transform:scaleX(1.0000);transform-origin:0 0;">get</div>
<div class="a" style="left:633.10px;top:224.75px;width:77.90px;height:8.25px;background:#e59a76;border-radius:2.5px"></div>
<div class="a t" style="left:635.60px;top:225.68px;font-size:8.00px;color:#1a1a1a;transform:scaleX(1.0000);transform-origin:0 0;">global User_name</div>
<svg class="a" style="left:703.40px;top:227.28px" width="4" height="3"><path d="M0.3 0.4H3.7L2 2.6Z" fill="#d05b26"/></svg>
<div class="a" style="left:614px;top:236px;width:55px;height:14px;background:#d05b26;"></div>
<div class="a" style="left:610.00px;top:239.38px;width:4.5px;height:7px;background:#d05b26;border-radius:2px 0 0 2px"></div>
<div class="a t" style="left:618.75px;top:239.71px;font-size:8.00px;color:#fff;-webkit-text-stroke:0.1px #fff;transform:scaleX(1.0000);transform-origin:0 0;">get</div>
<div class="a" style="left:633.10px;top:238.60px;width:32.90px;height:8.15px;background:#e59a76;border-radius:2.5px"></div>
<div class="a t" style="left:635.60px;top:239.48px;font-size:8.00px;color:#1a1a1a;transform:scaleX(1.0000);transform-origin:0 0;">value</div>
<svg class="a" style="left:658.40px;top:241.08px" width="4" height="3"><path d="M0.3 0.4H3.7L2 2.6Z" fill="#d05b26"/></svg>
<div class="a" style="left:533px;top:250px;width:4px;height:4px;background:#b08e35;"></div>
<div class="a" style="left:533px;top:405px;width:4px;height:4px;background:#b08e35;"></div>
<div class="a" style="left:533px;top:250px;width:42px;height:20px;background:#b08e35;border-radius:3px 0 0 0;"></div>
<div class="a" style="left:533px;top:270px;width:26px;height:139px;background:#b08e35;"></div>
<div class="a" style="left:533px;top:325px;width:42px;height:22px;background:#b08e35;"></div>
<div class="a" style="left:533px;top:402px;width:42px;height:7px;background:#b08e35;border-radius:0 0 0 3px;"></div>
<div class="a" style="left:533px;top:250px;width:1px;height:159px;background:rgba(255,255,255,0.28);"></div>
<div class="a" style="left:537.75px;top:253.10px;width:8.6px;height:8.6px;background:#2b22c4;border-radius:2px;box-shadow:0 0 0 0.5px rgba(255,255,230,0.45)"><svg width="8.6" height="8.6" style="display:block"><circle cx="4.3" cy="4.3" r="2.2" fill="none" stroke="#f4f0d8" stroke-width="1.2"/><g fill="#f4f0d8"><circle cx="4.3" cy="1.5" r="0.75"/><circle cx="4.3" cy="7.1" r="0.75"/><circle cx="1.9" cy="2.9" r="0.75"/><circle cx="6.7" cy="2.9" r="0.75"/><circle cx="1.9" cy="5.7" r="0.75"/><circle cx="6.7" cy="5.7" r="0.75"/></g><circle cx="4.3" cy="4.3" r="0.9" fill="#2b22c4"/></svg></div>
<div class="a t" style="left:552.25px;top:254.01px;font-size:8.00px;color:#fff;-webkit-text-stroke:0.1px #fff;transform:scaleX(1.0000);transform-origin:0 0;">if</div>
<div class="a" style="left:575px;top:250px;width:189px;height:19px;background:#77ab41;"></div>
<div class="a" style="left:571.00px;top:254.12px;width:4.5px;height:7px;background:#77ab41;border-radius:2px 0 0 2px"></div>
<div class="a" style="left:585px;top:253px;width:80px;height:14px;background:#d05b26;"></div>
<div class="a" style="left:580.75px;top:256.50px;width:4.5px;height:7px;background:#d05b26;border-radius:2px 0 0 2px"></div>
<div class="a t" style="left:589.75px;top:256.81px;font-size:8.00px;color:#fff;-webkit-text-stroke:0.1px #fff;transform:scaleX(1.0000);transform-origin:0 0;">get</div>
<div class="a" style="left:603.75px;top:255.60px;width:58.15px;height:8.15px;background:#e59a76;border-radius:2.5px"></div>
<div class="a t" style="left:606.25px;top:256.48px;font-size:8.00px;color:#1a1a1a;transform:scaleX(1.0000);transform-origin:0 0;">global status</div>
<svg class="a" style="left:654.30px;top:258.07px" width="4" height="3"><path d="M0.3 0.4H3.7L2 2.6Z" fill="#d05b26"/></svg>
<div class="a" style="left:668.10px;top:255.60px;width:18.40px;height:8.15px;background:#c9e0b0;border-radius:2.5px"></div>
<div class="a t" style="left:670.60px;top:256.48px;font-size:8.00px;color:#1a1a1a;transform:scaleX(1.0000);transform-origin:0 0;">=</div>
<svg class="a" style="left:678.90px;top:258.07px" width="4" height="3"><path d="M0.3 0.4H3.7L2 2.6Z" fill="#77ab41"/></svg>
<div class="a" style="left:694px;top:254px;width:65px;height:13px;background:#b32d5e;"></div>
<div class="a" style="left:689.50px;top:256.70px;width:4.5px;height:7px;background:#b32d5e;border-radius:2px 0 0 2px"></div>
<div class="a" style="left:703.75px;top:256.40px;width:43.50px;height:7.60px;background:#dba2bd;border-radius:2.5px"></div>
<div class="a t" style="left:705.95px;top:257.01px;font-size:8.00px;color:#1a1a1a;transform:scaleX(1.0000);transform-origin:0 0;">registreren</div>
<svg class="a" style="left:698.75px;top:255.90px" width="2.4" height="2.4"><rect width="2.4" height="2.4" fill="#f3dbe6"/></svg>
<svg class="a" style="left:750.05px;top:255.90px" width="2.4" height="2.4"><rect width="2.4" height="2.4" fill="#f3dbe6"/></svg>
<div class="a t" style="left:537.75px;top:273.06px;font-size:8.00px;color:#fff;-webkit-text-stroke:0.1px #fff;transform:scaleX(1.0000);transform-origin:0 0;">then</div>
<div class="a" style="left:559px;top:270px;width:4px;height:4px;background:#b08e35;"></div>
<div class="a" style="left:559px;top:321px;width:4px;height:4px;background:#b08e35;"></div>
<div class="a" style="left:559px;top:270px;width:150px;height:55px;background:#7c5289;border-radius:4px 0 0 4px;"></div>
<div class="a t" style="left:564.75px;top:273.31px;font-size:8.00px;color:#fff;-webkit-text-stroke:0.1px #fff;transform:scaleX(1.0000);transform-origin:0 0;">call</div>
<div class="a" style="left:581.25px;top:272.50px;width:38.15px;height:8.10px;background:#cdbcd5;border-radius:2.5px"></div>
<div class="a t" style="left:583.75px;top:273.36px;font-size:8.00px;color:#1a1a1a;transform:scaleX(1.0000);transform-origin:0 0;">Melder</div>
<svg class="a" style="left:611.80px;top:274.95px" width="4" height="3"><path d="M0.3 0.4H3.7L2 2.6Z" fill="#7c5289"/></svg>
<div class="a t" style="left:622.50px;top:273.31px;font-size:8.00px;color:#fff;-webkit-text-stroke:0.1px #fff;transform:scaleX(1.0000);transform-origin:0 0;">.ShowMessageDialog</div>
<div class="a t" style="left:398.75px;width:300.00px;text-align:right;top:286.81px;font-size:8.00px;color:#fff;-webkit-text-stroke:0.1px #fff;transform:scaleX(1.0000);transform-origin:300.00px 0">message</div>
<div class="a" style="left:709px;top:284px;width:101px;height:13px;background:#d05b26;"></div>
<div class="a" style="left:704.75px;top:286.70px;width:4.5px;height:7px;background:#d05b26;border-radius:2px 0 0 2px"></div>
<div class="a t" style="left:714.40px;top:287.01px;font-size:8.00px;color:#fff;-webkit-text-stroke:0.1px #fff;transform:scaleX(1.0000);transform-origin:0 0;">get</div>
<div class="a" style="left:728.10px;top:286.00px;width:78.15px;height:8.20px;background:#e59a76;border-radius:2.5px"></div>
<div class="a t" style="left:730.60px;top:286.91px;font-size:8.00px;color:#1a1a1a;transform:scaleX(1.0000);transform-origin:0 0;">global User_name</div>
<svg class="a" style="left:798.65px;top:288.50px" width="4" height="3"><path d="M0.3 0.4H3.7L2 2.6Z" fill="#d05b26"/></svg>
<div class="a t" style="left:398.75px;width:300.00px;text-align:right;top:300.56px;font-size:8.00px;color:#fff;-webkit-text-stroke:0.1px #fff;transform:scaleX(1.0000);transform-origin:300.00px 0">title</div>
<div class="a" style="left:709px;top:298px;width:109px;height:13px;background:#b32d5e;"></div>
<div class="a" style="left:704.75px;top:300.55px;width:4.5px;height:7px;background:#b32d5e;border-radius:2px 0 0 2px"></div>
<div class="a" style="left:720.00px;top:300.25px;width:86.25px;height:7.60px;background:#dba2bd;border-radius:2.5px"></div>
<div class="a t" style="left:722.20px;top:300.86px;font-size:8.00px;color:#1a1a1a;transform:scaleX(1.0000);transform-origin:0 0;">Username al in gebruik</div>
<svg class="a" style="left:715.00px;top:299.75px" width="2.4" height="2.4"><rect width="2.4" height="2.4" fill="#f3dbe6"/></svg>
<svg class="a" style="left:809.05px;top:299.75px" width="2.4" height="2.4"><rect width="2.4" height="2.4" fill="#f3dbe6"/></svg>
<div class="a t" style="left:398.75px;width:300.00px;text-align:right;top:314.91px;font-size:8.00px;color:#fff;-webkit-text-stroke:0.1px #fff;transform:scaleX(1.0000);transform-origin:300.00px 0">buttonText</div>
<div class="a" style="left:709px;top:312px;width:39px;height:13px;background:#b32d5e;"></div>
<div class="a" style="left:704.75px;top:314.75px;width:4.5px;height:7px;background:#b32d5e;border-radius:2px 0 0 2px"></div>
<div class="a" style="left:720.00px;top:314.45px;width:16.50px;height:7.60px;background:#dba2bd;border-radius:2.5px"></div>
<div class="a t" style="left:722.20px;top:315.06px;font-size:8.00px;color:#1a1a1a;transform:scaleX(1.0000);transform-origin:0 0;">OK</div>
<svg class="a" style="left:715.00px;top:313.95px" width="2.4" height="2.4"><rect width="2.4" height="2.4" fill="#f3dbe6"/></svg>
<svg class="a" style="left:739.30px;top:313.95px" width="2.4" height="2.4"><rect width="2.4" height="2.4" fill="#f3dbe6"/></svg>
<div class="a t" style="left:537.75px;top:330.81px;font-size:8.00px;color:#fff;-webkit-text-stroke:0.1px #fff;transform:scaleX(1.0000);transform-origin:0 0;">else if</div>
<div class="a" style="left:575px;top:327px;width:168px;height:20px;background:#77ab41;"></div>
<div class="a" style="left:571.00px;top:331.12px;width:4.5px;height:7px;background:#77ab41;border-radius:2px 0 0 2px"></div>
<div class="a" style="left:585px;top:330px;width:80px;height:14px;background:#d05b26;"></div>
<div class="a" style="left:580.75px;top:333.50px;width:4.5px;height:7px;background:#d05b26;border-radius:2px 0 0 2px"></div>
<div class="a t" style="left:589.75px;top:333.81px;font-size:8.00px;color:#fff;-webkit-text-stroke:0.1px #fff;transform:scaleX(1.0000);transform-origin:0 0;">get</div>
<div class="a" style="left:603.75px;top:332.75px;width:58.15px;height:8.25px;background:#e59a76;border-radius:2.5px"></div>
<div class="a t" style="left:606.25px;top:333.68px;font-size:8.00px;color:#1a1a1a;transform:scaleX(1.0000);transform-origin:0 0;">global status</div>
<svg class="a" style="left:654.30px;top:335.27px" width="4" height="3"><path d="M0.3 0.4H3.7L2 2.6Z" fill="#d05b26"/></svg>
<div class="a" style="left:668.10px;top:332.75px;width:18.80px;height:8.25px;background:#c9e0b0;border-radius:2.5px"></div>
<div class="a t" style="left:670.60px;top:333.68px;font-size:8.00px;color:#1a1a1a;transform:scaleX(1.0000);transform-origin:0 0;">=</div>
<svg class="a" style="left:679.30px;top:335.27px" width="4" height="3"><path d="M0.3 0.4H3.7L2 2.6Z" fill="#77ab41"/></svg>
<div class="a" style="left:694px;top:330px;width:43px;height:14px;background:#b32d5e;"></div>
<div class="a" style="left:689.50px;top:333.50px;width:4.5px;height:7px;background:#b32d5e;border-radius:2px 0 0 2px"></div>
<div class="a" style="left:704.40px;top:333.20px;width:21.60px;height:7.60px;background:#dba2bd;border-radius:2.5px"></div>
<div class="a t" style="left:706.60px;top:333.81px;font-size:8.00px;color:#1a1a1a;transform:scaleX(1.0000);transform-origin:0 0;">login</div>
<svg class="a" style="left:699.40px;top:332.70px" width="2.4" height="2.4"><rect width="2.4" height="2.4" fill="#f3dbe6"/></svg>
<svg class="a" style="left:728.80px;top:332.70px" width="2.4" height="2.4"><rect width="2.4" height="2.4" fill="#f3dbe6"/></svg>
<div class="a t" style="left:537.75px;top:350.31px;font-size:8.00px;color:#fff;-webkit-text-stroke:0.1px #fff;transform:scaleX(1.0000);transform-origin:0 0;">then</div>
<div class="a" style="left:559px;top:347px;width:4px;height:4px;background:#b08e35;"></div>
<div class="a" style="left:559px;top:398px;width:4px;height:4px;background:#b08e35;"></div>
<div class="a" style="left:559px;top:347px;width:250px;height:14px;background:#266643;border-radius:4px 0 0 0;"></div>
<div class="a t" style="left:564.75px;top:350.81px;font-size:8.00px;color:#fff;-webkit-text-stroke:0.1px #fff;transform:scaleX(1.0000);transform-origin:0 0;">set</div>
<div class="a" style="left:580.00px;top:350.00px;width:136.50px;height:8.10px;background:#a9c7b5;border-radius:2.5px"></div>
<div class="a t" style="left:582.50px;top:350.86px;font-size:8.00px;color:#1a1a1a;transform:scaleX(1.0000);transform-origin:0 0;">wachtwoord_en_username_opslag</div>
<svg class="a" style="left:708.90px;top:352.45px" width="4" height="3"><path d="M0.3 0.4H3.7L2 2.6Z" fill="#266643"/></svg>
<div class="a t" style="left:719.50px;top:350.81px;font-size:8.00px;color:#fff;-webkit-text-stroke:0.1px #fff;transform:scaleX(1.0000);transform-origin:0 0;">.</div>
<div class="a" style="left:724.40px;top:349.75px;width:62.50px;height:8.00px;background:#a9c7b5;border-radius:2.5px"></div>
<div class="a t" style="left:726.90px;top:350.56px;font-size:8.00px;color:#1a1a1a;transform:scaleX(1.0000);transform-origin:0 0;">ProjectBucket</div>
<svg class="a" style="left:779.30px;top:352.15px" width="4" height="3"><path d="M0.3 0.4H3.7L2 2.6Z" fill="#266643"/></svg>
<div class="a t" style="left:791.90px;top:350.81px;font-size:8.00px;color:#fff;-webkit-text-stroke:0.1px #fff;transform:scaleX(1.0000);transform-origin:0 0;">to</div>
<div class="a" style="left:809px;top:347px;width:101px;height:14px;background:#d05b26;"></div>
<div class="a" style="left:804.75px;top:350.43px;width:4.5px;height:7px;background:#d05b26;border-radius:2px 0 0 2px"></div>
<div class="a t" style="left:814.00px;top:350.81px;font-size:8.00px;color:#fff;-webkit-text-stroke:0.1px #fff;transform:scaleX(1.0000);transform-origin:0 0;">get</div>
<div class="a" style="left:828.10px;top:349.90px;width:77.90px;height:8.20px;background:#e59a76;border-radius:2.5px"></div>
<div class="a t" style="left:830.60px;top:350.81px;font-size:8.00px;color:#1a1a1a;transform:scaleX(1.0000);transform-origin:0 0;">global User_name</div>
<svg class="a" style="left:898.40px;top:352.40px" width="4" height="3"><path d="M0.3 0.4H3.7L2 2.6Z" fill="#d05b26"/></svg>
<div class="a" style="left:559px;top:361px;width:206px;height:41px;background:#7c5289;border-radius:0 0 0 4px;"></div>
<div class="a t" style="left:564.75px;top:364.91px;font-size:8.00px;color:#fff;-webkit-text-stroke:0.1px #fff;transform:scaleX(1.0000);transform-origin:0 0;">call</div>
<div class="a" style="left:581.25px;top:364.00px;width:136.50px;height:8.25px;background:#cdbcd5;border-radius:2.5px"></div>
<div class="a t" style="left:583.75px;top:364.93px;font-size:8.00px;color:#1a1a1a;transform:scaleX(1.0000);transform-origin:0 0;">wachtwoord_en_username_opslag</div>
<svg class="a" style="left:710.15px;top:366.52px" width="4" height="3"><path d="M0.3 0.4H3.7L2 2.6Z" fill="#7c5289"/></svg>
<div class="a t" style="left:720.60px;top:364.56px;font-size:8.00px;color:#fff;-webkit-text-stroke:0.1px #fff;transform:scaleX(1.0000);transform-origin:0 0;">.GetValue</div>
<div class="a t" style="left:455.00px;width:300.00px;text-align:right;top:378.31px;font-size:8.00px;color:#fff;-webkit-text-stroke:0.1px #fff;transform:scaleX(1.0000);transform-origin:300.00px 0">tag</div>
<div class="a" style="left:765px;top:375px;width:70px;height:13px;background:#b32d5e;"></div>
<div class="a" style="left:761.25px;top:378.18px;width:4.5px;height:7px;background:#b32d5e;border-radius:2px 0 0 2px"></div>
<div class="a" style="left:776.25px;top:377.88px;width:47.50px;height:7.60px;background:#dba2bd;border-radius:2.5px"></div>
<div class="a t" style="left:778.45px;top:378.48px;font-size:8.00px;color:#1a1a1a;transform:scaleX(1.0000);transform-origin:0 0;">wachtwoord</div>
<svg class="a" style="left:771.25px;top:377.38px" width="2.4" height="2.4"><rect width="2.4" height="2.4" fill="#f3dbe6"/></svg>
<svg class="a" style="left:826.55px;top:377.38px" width="2.4" height="2.4"><rect width="2.4" height="2.4" fill="#f3dbe6"/></svg>
<div class="a t" style="left:455.00px;width:300.00px;text-align:right;top:392.41px;font-size:8.00px;color:#fff;-webkit-text-stroke:0.1px #fff;transform:scaleX(1.0000);transform-origin:300.00px 0">valueIfTagNotThere</div>
<div class="a" style="left:765px;top:389px;width:30px;height:13px;background:#b32d5e;"></div>
<div class="a" style="left:761.25px;top:391.95px;width:4.5px;height:7px;background:#b32d5e;border-radius:2px 0 0 2px"></div>
<div class="a" style="left:776.25px;top:391.65px;width:7.50px;height:7.60px;background:#dba2bd;border-radius:2.5px"></div>
<svg class="a" style="left:771.25px;top:391.15px" width="2.4" height="2.4"><rect width="2.4" height="2.4" fill="#f3dbe6"/></svg>
<svg class="a" style="left:786.55px;top:391.15px" width="2.4" height="2.4"><rect width="2.4" height="2.4" fill="#f3dbe6"/></svg>
<div class="a t" style="left:511.00px;top:420.31px;font-size:8.00px;color:#fff;-webkit-text-stroke:0.1px #fff;transform:scaleX(1.0000);transform-origin:0 0;">else</div>
<div class="a" style="left:533px;top:417px;width:4px;height:4px;background:#b08e35;"></div>
<div class="a" style="left:533px;top:482px;width:4px;height:4px;background:#b08e35;"></div>
<div class="a" style="left:533px;top:417px;width:249px;height:14px;background:#266643;border-radius:4px 0 0 0;"></div>
<div class="a t" style="left:537.75px;top:420.71px;font-size:8.00px;color:#fff;-webkit-text-stroke:0.1px #fff;transform:scaleX(1.0000);transform-origin:0 0;">set</div>
<div class="a" style="left:553.75px;top:420.25px;width:135.65px;height:7.85px;background:#a9c7b5;border-radius:2.5px"></div>
<div class="a t" style="left:556.25px;top:420.98px;font-size:8.00px;color:#1a1a1a;transform:scaleX(1.0000);transform-origin:0 0;">wachtwoord_en_username_opslag</div>
<svg class="a" style="left:681.80px;top:422.57px" width="4" height="3"><path d="M0.3 0.4H3.7L2 2.6Z" fill="#266643"/></svg>
<div class="a t" style="left:692.50px;top:420.71px;font-size:8.00px;color:#fff;-webkit-text-stroke:0.1px #fff;transform:scaleX(1.0000);transform-origin:0 0;">.</div>
<div class="a" style="left:698.10px;top:420.25px;width:62.15px;height:7.85px;background:#a9c7b5;border-radius:2.5px"></div>
<div class="a t" style="left:700.60px;top:420.98px;font-size:8.00px;color:#1a1a1a;transform:scaleX(1.0000);transform-origin:0 0;">ProjectBucket</div>
<svg class="a" style="left:752.65px;top:422.57px" width="4" height="3"><path d="M0.3 0.4H3.7L2 2.6Z" fill="#266643"/></svg>
<div class="a t" style="left:765.00px;top:420.71px;font-size:8.00px;color:#fff;-webkit-text-stroke:0.1px #fff;transform:scaleX(1.0000);transform-origin:0 0;">to</div>
<div class="a" style="left:782px;top:417px;width:101px;height:14px;background:#d05b26;"></div>
<div class="a" style="left:778.25px;top:420.43px;width:4.5px;height:7px;background:#d05b26;border-radius:2px 0 0 2px"></div>
<div class="a t" style="left:787.50px;top:420.71px;font-size:8.00px;color:#fff;-webkit-text-stroke:0.1px #fff;transform:scaleX(1.0000);transform-origin:0 0;">get</div>
<div class="a" style="left:801.50px;top:419.75px;width:77.90px;height:8.25px;background:#e59a76;border-radius:2.5px"></div>
<div class="a t" style="left:804.00px;top:420.68px;font-size:8.00px;color:#1a1a1a;transform:scaleX(1.0000);transform-origin:0 0;">global User_name</div>
<svg class="a" style="left:871.80px;top:422.27px" width="4" height="3"><path d="M0.3 0.4H3.7L2 2.6Z" fill="#d05b26"/></svg>
<div class="a" style="left:533px;top:431px;width:212px;height:41px;background:#7c5289;"></div>
<div class="a t" style="left:537.75px;top:434.56px;font-size:8.00px;color:#fff;-webkit-text-stroke:0.1px #fff;transform:scaleX(1.0000);transform-origin:0 0;">call</div>
<div class="a" style="left:555.00px;top:434.00px;width:136.00px;height:7.90px;background:#cdbcd5;border-radius:2.5px"></div>
<div class="a t" style="left:557.50px;top:434.76px;font-size:8.00px;color:#1a1a1a;transform:scaleX(1.0000);transform-origin:0 0;">wachtwoord_en_username_opslag</div>
<svg class="a" style="left:683.40px;top:436.35px" width="4" height="3"><path d="M0.3 0.4H3.7L2 2.6Z" fill="#7c5289"/></svg>
<div class="a t" style="left:694.40px;top:434.56px;font-size:8.00px;color:#fff;-webkit-text-stroke:0.1px #fff;transform:scaleX(1.0000);transform-origin:0 0;">.StoreValue</div>
<div class="a t" style="left:434.75px;width:300.00px;text-align:right;top:448.31px;font-size:8.00px;color:#fff;-webkit-text-stroke:0.1px #fff;transform:scaleX(1.0000);transform-origin:300.00px 0">tag</div>
<div class="a" style="left:745px;top:445px;width:69px;height:13px;background:#b32d5e;"></div>
<div class="a" style="left:741.00px;top:448.05px;width:4.5px;height:7px;background:#b32d5e;border-radius:2px 0 0 2px"></div>
<div class="a" style="left:756.25px;top:447.75px;width:46.50px;height:7.60px;background:#dba2bd;border-radius:2.5px"></div>
<div class="a t" style="left:758.45px;top:448.36px;font-size:8.00px;color:#1a1a1a;transform:scaleX(1.0000);transform-origin:0 0;">wachtwoord</div>
<svg class="a" style="left:751.25px;top:447.25px" width="2.4" height="2.4"><rect width="2.4" height="2.4" fill="#f3dbe6"/></svg>
<svg class="a" style="left:805.55px;top:447.25px" width="2.4" height="2.4"><rect width="2.4" height="2.4" fill="#f3dbe6"/></svg>
<div class="a t" style="left:434.75px;width:300.00px;text-align:right;top:462.41px;font-size:8.00px;color:#fff;-webkit-text-stroke:0.1px #fff;transform:scaleX(1.0000);transform-origin:300.00px 0">valueToStore</div>
<div class="a" style="left:745px;top:459px;width:103px;height:13px;background:#d05b26;"></div>
<div class="a" style="left:741.00px;top:462.12px;width:4.5px;height:7px;background:#d05b26;border-radius:2px 0 0 2px"></div>
<div class="a t" style="left:750.00px;top:462.41px;font-size:8.00px;color:#fff;-webkit-text-stroke:0.1px #fff;transform:scaleX(1.0000);transform-origin:0 0;">get</div>
<div class="a" style="left:764.75px;top:461.50px;width:80.00px;height:8.40px;background:#e59a76;border-radius:2.5px"></div>
<div class="a t" style="left:767.25px;top:462.51px;font-size:8.00px;color:#1a1a1a;transform:scaleX(1.0000);transform-origin:0 0;">global Wachtwoord</div>
<svg class="a" style="left:837.15px;top:464.10px" width="4" height="3"><path d="M0.3 0.4H3.7L2 2.6Z" fill="#d05b26"/></svg>
<div class="a" style="left:533px;top:472px;width:58px;height:14px;background:#7c5289;border-radius:0 0 0 4px;"></div>
<div class="a t" style="left:537.75px;top:476.21px;font-size:8.00px;color:#fff;-webkit-text-stroke:0.1px #fff;transform:scaleX(1.0000);transform-origin:0 0;">call</div>
<div class="a" style="left:554.75px;top:475.25px;width:32.75px;height:8.25px;background:#cdbcd5;border-radius:2.5px"></div>
<div class="a t" style="left:557.25px;top:476.18px;font-size:8.00px;color:#1a1a1a;transform:scaleX(1.0000);transform-origin:0 0;">Done</div>
<svg class="a" style="left:579.90px;top:477.77px" width="4" height="3"><path d="M0.3 0.4H3.7L2 2.6Z" fill="#7c5289"/></svg>
<svg class="a" style="left:513.75px;top:207.80px" width="9" height="3.5"><path d="M0 0L3 2.6H6L9 0Z" fill="#b08e35"/></svg>
<div class="a" style="left:505.80px;top:488.10px;width:7px;height:6px;border-left:1px solid rgba(255,255,255,0.85);border-bottom:1px solid rgba(255,255,255,0.85);border-bottom-left-radius:5px"></div>
<svg class="a" style="left:513.00px;top:220.80px" width="9" height="4"><path d="M0 0L3 3.2H6L9 0Z" fill="#d05b26"/></svg>
<svg class="a" style="left:513.50px;top:492.40px" width="9" height="4"><path d="M0 0L3 3.2H6L9 0Z" fill="#b08e35"/></svg>
<svg class="a" style="left:540.00px;top:249.70px" width="9" height="3.5"><path d="M0 0L3 2.6H6L9 0Z" fill="#b08e35"/></svg>
<div class="a" style="left:532.80px;top:403.75px;width:7px;height:6px;border-left:1px solid rgba(255,255,255,0.85);border-bottom:1px solid rgba(255,255,255,0.85);border-bottom-left-radius:5px"></div>
<svg class="a" style="left:539.50px;top:408.00px" width="9" height="4"><path d="M0 0L3 3.2H6L9 0Z" fill="#b08e35"/></svg>
<svg class="a" style="left:566.90px;top:269.45px" width="9" height="3.5"><path d="M0 0L3 2.6H6L9 0Z" fill="#b08e35"/></svg>
<div class="a" style="left:558.80px;top:320.00px;width:7px;height:6px;border-left:1px solid rgba(255,255,255,0.85);border-bottom:1px solid rgba(255,255,255,0.85);border-bottom-left-radius:5px"></div>
<svg class="a" style="left:566.00px;top:324.30px" width="9" height="4"><path d="M0 0L3 3.2H6L9 0Z" fill="#7c5289"/></svg>
<svg class="a" style="left:566.90px;top:346.95px" width="9" height="3.5"><path d="M0 0L3 2.6H6L9 0Z" fill="#b08e35"/></svg>
<div class="a" style="left:558.80px;top:396.90px;width:7px;height:6px;border-left:1px solid rgba(255,255,255,0.85);border-bottom:1px solid rgba(255,255,255,0.85);border-bottom-left-radius:5px"></div>
<svg class="a" style="left:566.00px;top:401.20px" width="9" height="4"><path d="M0 0L3 3.2H6L9 0Z" fill="#7c5289"/></svg>
<svg class="a" style="left:540.00px;top:416.95px" width="9" height="3.5"><path d="M0 0L3 2.6H6L9 0Z" fill="#b08e35"/></svg>
<div class="a" style="left:532.80px;top:481.25px;width:7px;height:6px;border-left:1px solid rgba(255,255,255,0.85);border-bottom:1px solid rgba(255,255,255,0.85);border-bottom-left-radius:5px"></div>
<svg class="a" style="left:539.00px;top:485.50px" width="9" height="4"><path d="M0 0L3 3.2H6L9 0Z" fill="#7c5289"/></svg>
<div class="a" style="left:211px;top:497px;width:56px;height:13px;background:#7c5289;border-radius:4px 0 0 0;"></div>
<div class="a" style="left:211px;top:510px;width:20px;height:35px;background:#7c5289;border-radius:0 0 0 4px;"></div>
<div class="a" style="left:211px;top:538px;width:56px;height:7px;background:#7c5289;border-radius:0 0 0 4px;"></div>
<div class="a" style="left:216.25px;top:499.40px;width:8.6px;height:8.6px;background:#2b22c4;border-radius:2px;box-shadow:0 0 0 0.5px rgba(255,255,230,0.45)"><svg width="8.6" height="8.6" style="display:block"><circle cx="4.3" cy="4.3" r="2.2" fill="none" stroke="#f4f0d8" stroke-width="1.2"/><g fill="#f4f0d8"><circle cx="4.3" cy="1.5" r="0.75"/><circle cx="4.3" cy="7.1" r="0.75"/><circle cx="1.9" cy="2.9" r="0.75"/><circle cx="6.7" cy="2.9" r="0.75"/><circle cx="1.9" cy="5.7" r="0.75"/><circle cx="6.7" cy="5.7" r="0.75"/></g><circle cx="4.3" cy="4.3" r="0.9" fill="#2b22c4"/></svg></div>
<div class="a t" style="left:230.60px;top:500.11px;font-size:8.00px;color:#fff;-webkit-text-stroke:0.1px #fff;transform:scaleX(1.0000);transform-origin:0 0;">to</div>
<div class="a" style="left:240.25px;top:499.40px;width:23.75px;height:8.10px;background:#cdbcd5;border-radius:2.5px"></div>
<div class="a t" style="left:242.75px;top:500.26px;font-size:8.00px;color:#1a1a1a;transform:scaleX(1.0000);transform-origin:0 0;">Done</div>
<div class="a t" style="left:216.00px;top:513.61px;font-size:8.00px;color:#fff;-webkit-text-stroke:0.1px #fff;transform:scaleX(1.0000);transform-origin:0 0;">do</div>
<div class="a" style="left:231px;top:510px;width:4px;height:4px;background:#7c5289;"></div>
<div class="a" style="left:231px;top:534px;width:4px;height:4px;background:#7c5289;"></div>
<div class="a" style="left:231px;top:510px;width:111px;height:28px;background:#7c5289;border-radius:4px 0 0 4px;"></div>
<div class="a t" style="left:236.20px;top:514.01px;font-size:8.00px;color:#fff;-webkit-text-stroke:0.1px #fff;transform:scaleX(1.0000);transform-origin:0 0;">call</div>
<div class="a" style="left:252.90px;top:513.20px;width:38.10px;height:8.40px;background:#cdbcd5;border-radius:2.5px"></div>
<div class="a t" style="left:255.40px;top:514.21px;font-size:8.00px;color:#1a1a1a;transform:scaleX(1.0000);transform-origin:0 0;">Melder</div>
<svg class="a" style="left:283.40px;top:515.80px" width="4" height="3"><path d="M0.3 0.4H3.7L2 2.6Z" fill="#7c5289"/></svg>
<div class="a t" style="left:294.90px;top:514.01px;font-size:8.00px;color:#fff;-webkit-text-stroke:0.1px #fff;transform:scaleX(1.0000);transform-origin:0 0;">.ShowAlert</div>
<div class="a t" style="left:32.20px;width:300.00px;text-align:right;top:527.71px;font-size:8.00px;color:#fff;-webkit-text-stroke:0.1px #fff;transform:scaleX(1.0000);transform-origin:300.00px 0">notice</div>
<div class="a" style="left:342px;top:524px;width:39px;height:14px;background:#b32d5e;"></div>
<div class="a" style="left:338.30px;top:527.25px;width:4.5px;height:7px;background:#b32d5e;border-radius:2px 0 0 2px"></div>
<div class="a" style="left:352.90px;top:526.95px;width:17.00px;height:7.60px;background:#dba2bd;border-radius:2.5px"></div>
<div class="a t" style="left:355.10px;top:527.56px;font-size:8.00px;color:#1a1a1a;transform:scaleX(1.0000);transform-origin:0 0;">OK</div>
<svg class="a" style="left:347.90px;top:526.45px" width="2.4" height="2.4"><rect width="2.4" height="2.4" fill="#f3dbe6"/></svg>
<svg class="a" style="left:372.70px;top:526.45px" width="2.4" height="2.4"><rect width="2.4" height="2.4" fill="#f3dbe6"/></svg>
<svg class="a" style="left:238.70px;top:510.00px" width="9" height="3.5"><path d="M0 0L3 2.6H6L9 0Z" fill="#7c5289"/></svg>
<div class="a" style="left:230.80px;top:532.80px;width:7px;height:6px;border-left:1px solid rgba(255,255,255,0.85);border-bottom:1px solid rgba(255,255,255,0.85);border-bottom-left-radius:5px"></div>
<div class="a" style="left:230.8px;top:512px;width:1px;height:22px;background:rgba(255,255,255,0.8)"></div>
</div></div>
<svg class="a" style="left:140px;top:484px" width="70" height="30"><path d="M14.2 1.8L19.6 7.6H8.8Z" fill="#fff" stroke="#333" stroke-width="0.9"/><path d="M14.2 27.7L19.6 22.3H8.8Z" fill="#fff" stroke="#333" stroke-width="0.9"/><path d="M50.3 1.8L55.7 7.6H44.9Z" fill="#fff" stroke="#333" stroke-width="0.9"/><path d="M50.3 27.7L55.7 22.3H44.9Z" fill="#fff" stroke="#333" stroke-width="0.9"/><path d="M13 10.5L17.5 18.5H8.5Z" fill="#f6f08a" stroke="#e0d860" stroke-width="0.6"/><rect x="12.6" y="12.8" width="0.8" height="3.4" fill="#888"/><rect x="12.6" y="16.8" width="0.8" height="0.8" fill="#888"/><circle cx="48.1" cy="15.5" r="4.3" fill="#e84040"/><path d="M46.3 13.7L49.9 17.3M49.9 13.7L46.3 17.3" stroke="#fff" stroke-width="1.2"/></svg>
<div class="a t" style="left:160.00px;top:498.19px;font-size:6.80px;color:#333;transform:scaleX(1.0000);transform-origin:0 0;">0</div>
<div class="a t" style="left:194.60px;top:498.19px;font-size:6.80px;color:#333;transform:scaleX(1.0000);transform-origin:0 0;">0</div>
<div class="a t" style="left:140.4px;top:513.2px;width:65.6px;height:11.3px;background:#eee;border:1px solid #555;font-size:7px;line-height:9.5px;text-align:center;color:#333">Show Warnings</div>
<svg class="a" style="left:1305px;top:112px" width="50" height="50"><path d="M31 13.2C37 13.5 40.6 16.5 41 21L41.6 36.2Q41.6 38.3 39.4 38.3L37.3 38.3" fill="none" stroke="#17332b" stroke-width="1.7"/><path d="M28 11.8C33.5 12.5 36.9 17 37 24L37.1 39.5Q37.1 41.8 34.5 41.8L30 42.5Z" fill="#4fb3a6" stroke="#17332b" stroke-width="1.1"/><path d="M19.7 10.4Q19.9 7.5 22.9 7.5Q25.9 7.5 26.1 10.6" fill="none" stroke="#17332b" stroke-width="1.3"/><path d="M8 29C8 17 13 10.2 21 10.2C29 10.2 33.6 17 33.6 29L33.6 40.3Q33.6 43.2 30.6 43.2L11 43.2Q8 43.2 8 40.3Z" fill="#4fb3a6" stroke="#17332b" stroke-width="1.3"/><path d="M13 29.5H29.9V36Q29.9 38.3 27.6 38.3H15.3Q13 38.3 13 36Z" fill="#4fb3a6" stroke="#17332b" stroke-width="1.15"/><path d="M13.2 33.1H29.7" stroke="#17332b" stroke-width="1"/></svg>
<svg class="a" style="left:1323px;top:420px" width="21" height="60"><circle cx="10.5" cy="10" r="5.7" fill="#fff" stroke="#111" stroke-width="1.5"/><circle cx="10.5" cy="10" r="2.1" fill="#111"/><path d="M10.5 2.3V4.4M10.5 15.6V17.7M2.8 10H4.9M16.1 10H18.2" stroke="#111" stroke-width="1.4"/><circle cx="10.5" cy="33.1" r="8.1" fill="#fff" stroke="#111" stroke-width="1.2"/><path d="M10.5 28.8V37.4M6.2 33.1H14.8" stroke="#111" stroke-width="1.3"/><circle cx="10.5" cy="51.5" r="8.1" fill="#fff" stroke="#111" stroke-width="1.2"/><path d="M6.2 51.5H14.8" stroke="#111" stroke-width="1.3"/></svg>
<svg class="a" style="left:1316px;top:493px" width="26" height="33"><path d="M7.5 2.5Q8 1 10 1L16 1Q18 1 18.5 2.5Z" fill="#1a1a1a"/><rect x="1.2" y="2.3" width="22.8" height="3" fill="#1a1a1a"/><path d="M2.5 8.3H22.8V28.5Q22.8 31 20.3 31H5Q2.5 31 2.5 28.5Z" fill="#1a1a1a"/></svg>
<div class="a" style="left:1354px;top:277.7px;width:5px;height:171px;background:#cfcfcf;border-radius:2.5px"></div>
<div class="a" style="left:415.4px;top:535.9px;width:645px;height:5.4px;background:#c8c8c8;border-radius:2.7px"></div>
</body></html>
